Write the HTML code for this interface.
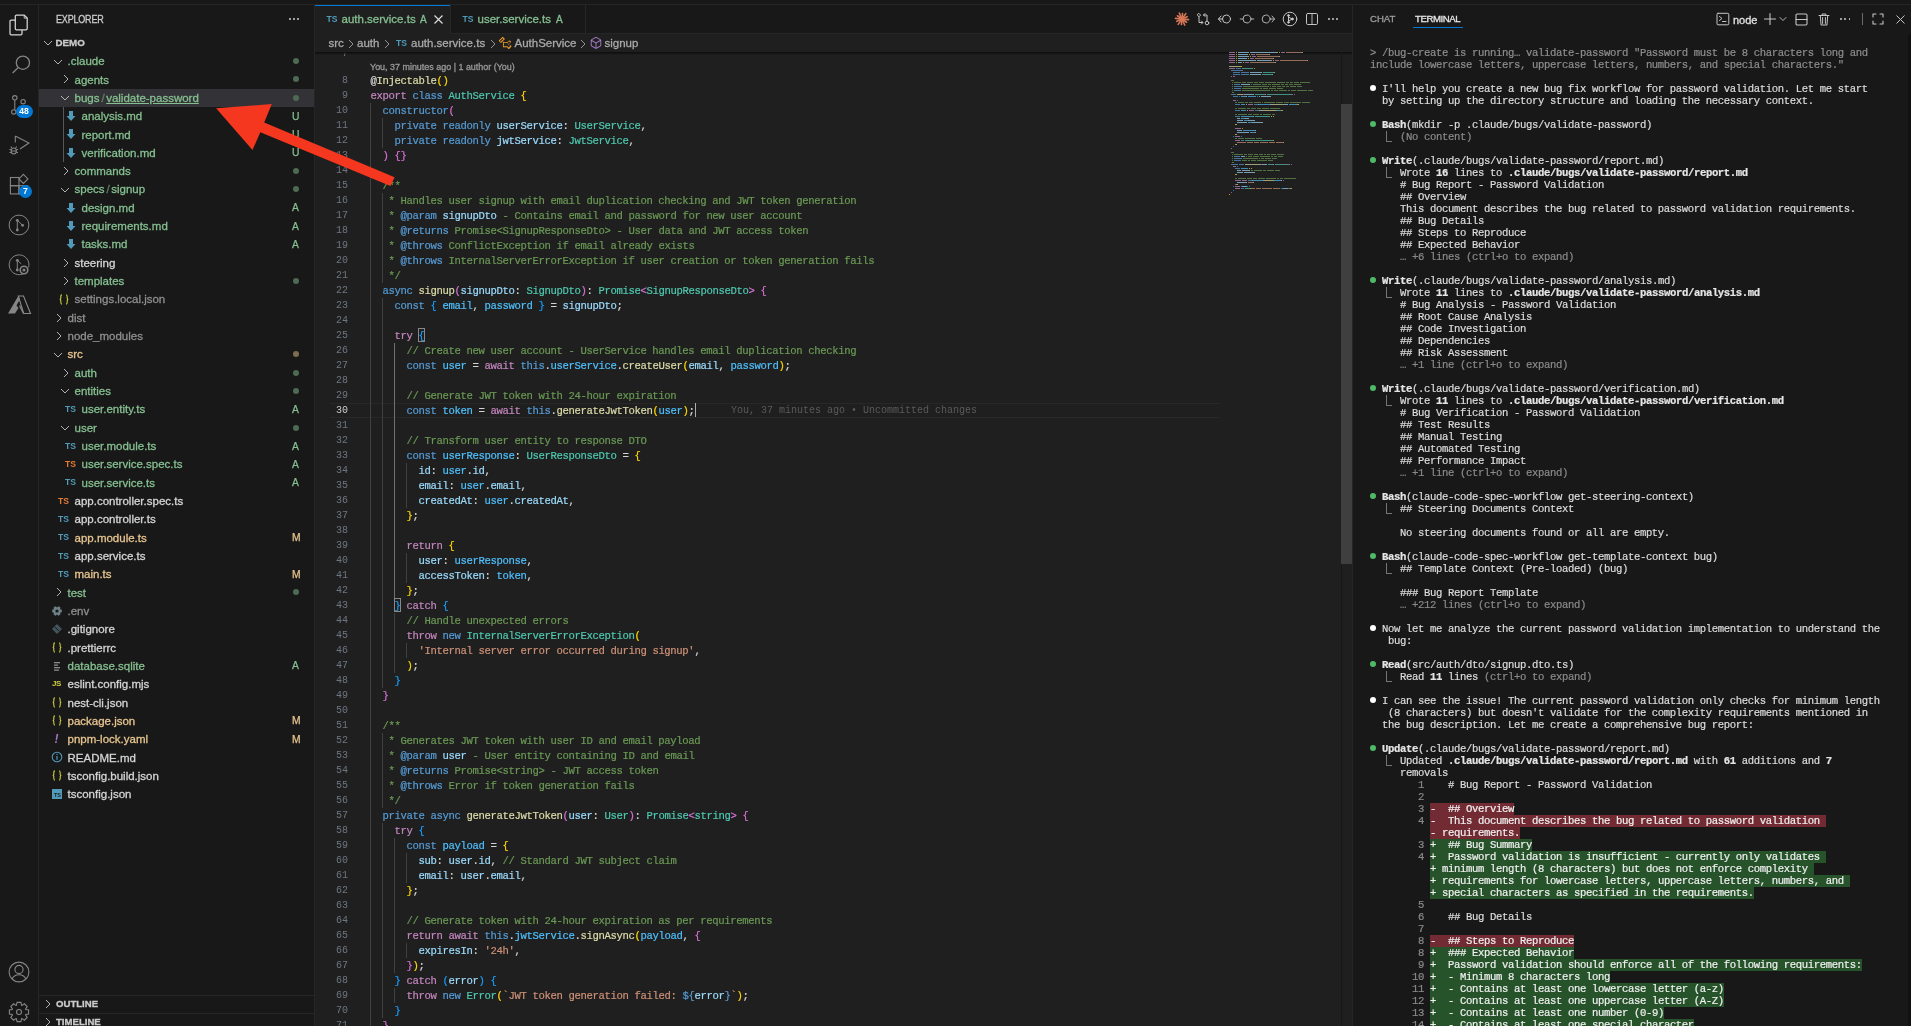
<!DOCTYPE html><html><head><meta charset="utf-8"><style>
*{margin:0;padding:0;box-sizing:border-box}
html,body{width:1911px;height:1026px;overflow:hidden;background:#181818}
body{position:relative;font-family:"Liberation Sans",sans-serif;color:#cccccc;-webkit-font-smoothing:antialiased}
.a{position:absolute}
.ui{font-family:"Liberation Sans",sans-serif;font-size:11.5px;white-space:pre;line-height:14px;-webkit-text-stroke-width:0.3px}
.mono{font-family:"Liberation Mono",monospace;white-space:pre}
svg{position:absolute;overflow:visible}
.code{font-size:10.6px;letter-spacing:-0.36px;-webkit-text-stroke-width:0.2px;}
.term{font-size:10.6px;letter-spacing:-0.36px;-webkit-text-stroke-width:0.2px;}
</style></head><body><div id="root" style="position:absolute;left:0;top:0;width:1911px;height:1026px;will-change:transform">
<div class="a" style="left:0;top:0;width:1911px;height:4px;background:#181818"></div>
<div class="a" style="left:0;top:4px;width:1911px;height:1px;background:#262626"></div>
<div class="a" style="left:0;top:5px;width:38px;height:1021px;background:#181818"></div>
<div class="a" style="left:38px;top:5px;width:1px;height:1021px;background:#262626"></div>
<div class="a" style="left:39px;top:5px;width:275px;height:1021px;background:#181818"></div>
<div class="a" style="left:314px;top:5px;width:1px;height:1021px;background:#262626"></div>
<div class="a" style="left:315px;top:5px;width:1037px;height:1021px;background:#1f1f1f"></div>
<div class="a" style="left:1352px;top:5px;width:1px;height:1021px;background:#262626"></div>
<div class="a" style="left:1353px;top:5px;width:558px;height:1021px;background:#181818"></div>
<svg class="a" style="left:4.0px;top:10.0px" width="30" height="30" viewBox="0 0 30 30" fill="none" stroke="#d4d4d4" stroke-width="1.25"><path d="M12.6 5.1h7.6l3 3V18.6a1.3 1.3 0 0 1-1.3 1.3H12.6a1.3 1.3 0 0 1-1.3-1.3V6.4a1.3 1.3 0 0 1 1.3-1.3z"/><path d="M20.2 5.1v3h3" stroke-width="0.9"/><path d="M11.3 10.1H7.3A1.3 1.3 0 0 0 6 11.4v12.2a1.3 1.3 0 0 0 1.3 1.3h9.4a1.3 1.3 0 0 0 1.3-1.3v-3.7"/></svg>
<svg class="a" style="left:7.0px;top:52.0px" width="24" height="24" viewBox="0 0 24 24" fill="none" stroke="#858585" stroke-width="1.3"><circle cx="15.9" cy="10.7" r="6.6"/><path d="M11.3 15.5L5.6 21"/></svg>
<svg class="a" style="left:7.0px;top:92.0px" width="24" height="24" viewBox="0 0 24 24" fill="none" stroke="#858585" stroke-width="1.1"><circle cx="7.8" cy="5.8" r="2.2"/><circle cx="16.1" cy="9.7" r="2.2"/><circle cx="6.8" cy="19.9" r="2.2"/><path d="M7.8 8v9.7"/></svg>
<div class="a" style="left:15.5px;top:104.5px;width:17px;height:13.5px;border-radius:7px;background:#0078d4;color:#fff;font:bold 8.6px/13.5px 'Liberation Sans',sans-serif;text-align:center">48</div>
<svg class="a" style="left:7.0px;top:132.0px" width="24" height="24" viewBox="0 0 24 24" fill="none" stroke="#858585" stroke-width="1.1"><path d="M8.3 4v6.5M8.3 4l13.6 7-9 6"/><ellipse cx="6.75" cy="19" rx="2.6" ry="3"/><path d="M4.2 17.5H2.5M4.2 20.5H2.5M9.3 17.5H11M9.3 20.5H11M4.8 15.8l-1-1.3M8.7 15.8l1-1.3M4.2 19H9.3"/></svg>
<svg class="a" style="left:7.0px;top:172.0px" width="24" height="24" viewBox="0 0 24 24" fill="none" stroke="#858585" stroke-width="1.1"><rect x="3.4" y="5.5" width="8.6" height="8.2"/><rect x="3.4" y="13.7" width="8.6" height="8.2"/><rect x="12" y="13.7" width="8.6" height="8.2"/><path d="M16.4 2.4l4.5 4.5-4.5 4.5-4.5-4.5z"/></svg>
<div class="a" style="left:19px;top:185px;width:13px;height:13px;border-radius:7px;background:#0078d4;color:#fff;font:bold 8.6px/13px 'Liberation Sans',sans-serif;text-align:center">7</div>
<svg class="a" style="left:7.0px;top:213.0px" width="24" height="24" viewBox="0 0 24 24" fill="none" stroke="#858585" stroke-width="1.0"><circle cx="12" cy="12" r="9.9"/><circle cx="10.3" cy="7.3" r="1.4" fill="#858585" stroke="none"/><circle cx="10.3" cy="17" r="1.4" fill="#858585" stroke="none"/><circle cx="15.6" cy="12.3" r="1.4" fill="#858585" stroke="none"/><path d="M10.3 7.3V17M10.3 7.3l5.3 5"/></svg>
<svg class="a" style="left:7.0px;top:253.0px" width="24" height="24" viewBox="0 0 24 24" fill="none" stroke="#858585" stroke-width="1.0"><path d="M16.8 20.5A9.9 9.9 0 1 1 21.6 14.5"/><circle cx="10.3" cy="7.3" r="1.4" fill="#858585" stroke="none"/><circle cx="10.3" cy="17" r="1.4" fill="#858585" stroke="none"/><path d="M10.3 7.3V17M10.3 7.3l4 3.6"/><circle cx="17" cy="17" r="3.8" stroke-width="1.6"/><circle cx="17" cy="17" r="1.5" fill="#858585" stroke="none"/></svg>
<svg class="a" style="left:7.0px;top:293.0px" width="24" height="24" viewBox="0 0 24 24" fill="none" stroke="#858585" stroke-width="1.2"><path d="M11.3 3h5.2l7 17.5h-6.8z" fill="none" stroke="#8a8a8a" stroke-width="1.1"/><path d="M11.3 3L1 20.5h7l3.5-5.5-2-2.5 3.5-6.3z" fill="#858585" stroke="none"/><path d="M12.5 12.5l4 8" stroke="#8a8a8a" stroke-width="1.3"/></svg>
<svg class="a" style="left:7.0px;top:960.0px" width="24" height="24" viewBox="0 0 24 24" fill="none" stroke="#858585" stroke-width="1.1"><circle cx="12" cy="12" r="9.9"/><circle cx="12" cy="9.5" r="4.1"/><path d="M5 18.8c1.6-2.9 4.2-4.1 7-4.1s5.4 1.2 7 4.1"/></svg>
<svg class="a" style="left:7.0px;top:1000.0px" width="24" height="24" viewBox="0 0 24 24" fill="none" stroke="#858585" stroke-width="1.1"><polygon points="10.05,2.40 13.95,2.40 14.54,5.26 14.97,5.44 17.41,3.83 20.17,6.59 18.56,9.03 18.74,9.46 21.60,10.05 21.60,13.95 18.74,14.54 18.56,14.97 20.17,17.41 17.41,20.17 14.97,18.56 14.54,18.74 13.95,21.60 10.05,21.60 9.46,18.74 9.03,18.56 6.59,20.17 3.83,17.41 5.44,14.97 5.26,14.54 2.40,13.95 2.40,10.05 5.26,9.46 5.44,9.03 3.83,6.59 6.59,3.83 9.03,5.44 9.46,5.26"/><circle cx="12" cy="12" r="2.5"/></svg>
<div class="a ui" style="left:55.5px;top:13.3px;font-size:10px;color:#cccccc;letter-spacing:-0.2px;transform:scaleX(0.9);transform-origin:0 0">EXPLORER</div>
<div class="a" style="left:288.84999999999997px;top:17.849999999999998px;width:1.7px;height:1.7px;border-radius:1px;background:#cccccc"></div>
<div class="a" style="left:293.15px;top:17.849999999999998px;width:1.7px;height:1.7px;border-radius:1px;background:#cccccc"></div>
<div class="a" style="left:297.45px;top:17.849999999999998px;width:1.7px;height:1.7px;border-radius:1px;background:#cccccc"></div>
<svg class="a" style="left:42.5px;top:38px" width="10" height="10" viewBox="0 0 10 10" fill="none" stroke="#c5c5c5" stroke-width="0.9"><path d="M1 3l4 4 4-4"/></svg>
<div class="a ui" style="left:55.5px;top:36px;font-size:9.8px;font-weight:bold;color:#cccccc">DEMO</div>
<div class="a" style="left:39px;top:88.65px;width:275px;height:18px;background:#333337"></div>
<div class="a" style="left:62.5px;top:106.65px;width:1px;height:54.974999999999994px;background:#585858"></div>
<svg class="a" style="left:53px;top:56.5px" width="10" height="10" viewBox="0 0 10 10" fill="none" stroke="#c5c5c5" stroke-width="0.9"><path d="M1 3l4 4 4-4"/></svg>
<div class="a ui" style="left:67.5px;top:54.2px;color:#85bf90">.claude</div>
<div class="a" style="left:293px;top:58.0px;width:6px;height:6px;border-radius:3px;background:#4e6a54"></div>
<svg class="a" style="left:60.5px;top:74.325px" width="10" height="10" viewBox="0 0 10 10" fill="none" stroke="#c5c5c5" stroke-width="0.9"><path d="M3 1l4 4-4 4"/></svg>
<div class="a ui" style="left:74.5px;top:72.525px;color:#85bf90">agents</div>
<div class="a" style="left:293px;top:76.325px;width:6px;height:6px;border-radius:3px;background:#4e6a54"></div>
<svg class="a" style="left:60px;top:93.15px" width="10" height="10" viewBox="0 0 10 10" fill="none" stroke="#c5c5c5" stroke-width="0.9"><path d="M1 3l4 4 4-4"/></svg>
<div class="a ui" style="left:74.5px;top:90.85000000000001px;color:#85bf90">bugs<span style="color:#5f7f66;margin:0 1.5px 0 2px">/</span><span style=" text-decoration:underline;text-underline-offset:1px">validate-password</span></div>
<div class="a" style="left:293px;top:94.65px;width:6px;height:6px;border-radius:3px;background:#4e6a54"></div>
<svg class="a" style="left:65.5px;top:109.975px" width="10" height="12" viewBox="0 0 10 12"><path d="M3 1h4v5h2.5L5 11 0.5 6H3z" fill="#519aba"/></svg>
<div class="a ui" style="left:81.5px;top:109.175px;color:#85bf90">analysis.md</div>
<div class="a ui" style="left:292px;top:109.675px;color:#85bf90;font-size:10.3px;-webkit-text-stroke-width:0.25px">U</div>
<svg class="a" style="left:65.5px;top:128.3px" width="10" height="12" viewBox="0 0 10 12"><path d="M3 1h4v5h2.5L5 11 0.5 6H3z" fill="#519aba"/></svg>
<div class="a ui" style="left:81.5px;top:127.50000000000001px;color:#85bf90">report.md</div>
<div class="a ui" style="left:292px;top:128.0px;color:#85bf90;font-size:10.3px;-webkit-text-stroke-width:0.25px">U</div>
<svg class="a" style="left:65.5px;top:146.625px" width="10" height="12" viewBox="0 0 10 12"><path d="M3 1h4v5h2.5L5 11 0.5 6H3z" fill="#519aba"/></svg>
<div class="a ui" style="left:81.5px;top:145.825px;color:#85bf90">verification.md</div>
<div class="a ui" style="left:292px;top:146.325px;color:#85bf90;font-size:10.3px;-webkit-text-stroke-width:0.25px">U</div>
<svg class="a" style="left:60.5px;top:165.95px" width="10" height="10" viewBox="0 0 10 10" fill="none" stroke="#c5c5c5" stroke-width="0.9"><path d="M3 1l4 4-4 4"/></svg>
<div class="a ui" style="left:74.5px;top:164.14999999999998px;color:#85bf90">commands</div>
<div class="a" style="left:293px;top:167.95px;width:6px;height:6px;border-radius:3px;background:#4e6a54"></div>
<svg class="a" style="left:60px;top:184.775px" width="10" height="10" viewBox="0 0 10 10" fill="none" stroke="#c5c5c5" stroke-width="0.9"><path d="M1 3l4 4 4-4"/></svg>
<div class="a ui" style="left:74.5px;top:182.475px;color:#85bf90">specs<span style="color:#5f7f66;margin:0 1.5px 0 2px">/</span><span style="">signup</span></div>
<div class="a" style="left:293px;top:186.275px;width:6px;height:6px;border-radius:3px;background:#4e6a54"></div>
<svg class="a" style="left:65.5px;top:201.6px" width="10" height="12" viewBox="0 0 10 12"><path d="M3 1h4v5h2.5L5 11 0.5 6H3z" fill="#519aba"/></svg>
<div class="a ui" style="left:81.5px;top:200.79999999999998px;color:#85bf90">design.md</div>
<div class="a ui" style="left:292px;top:201.29999999999998px;color:#85bf90;font-size:10.3px;-webkit-text-stroke-width:0.25px">A</div>
<svg class="a" style="left:65.5px;top:219.92499999999998px" width="10" height="12" viewBox="0 0 10 12"><path d="M3 1h4v5h2.5L5 11 0.5 6H3z" fill="#519aba"/></svg>
<div class="a ui" style="left:81.5px;top:219.12499999999997px;color:#85bf90">requirements.md</div>
<div class="a ui" style="left:292px;top:219.62499999999997px;color:#85bf90;font-size:10.3px;-webkit-text-stroke-width:0.25px">A</div>
<svg class="a" style="left:65.5px;top:238.25px" width="10" height="12" viewBox="0 0 10 12"><path d="M3 1h4v5h2.5L5 11 0.5 6H3z" fill="#519aba"/></svg>
<div class="a ui" style="left:81.5px;top:237.45px;color:#85bf90">tasks.md</div>
<div class="a ui" style="left:292px;top:237.95px;color:#85bf90;font-size:10.3px;-webkit-text-stroke-width:0.25px">A</div>
<svg class="a" style="left:60.5px;top:257.575px" width="10" height="10" viewBox="0 0 10 10" fill="none" stroke="#c5c5c5" stroke-width="0.9"><path d="M3 1l4 4-4 4"/></svg>
<div class="a ui" style="left:74.5px;top:255.77499999999998px;color:#d4d4d4">steering</div>
<svg class="a" style="left:60.5px;top:275.9px" width="10" height="10" viewBox="0 0 10 10" fill="none" stroke="#c5c5c5" stroke-width="0.9"><path d="M3 1l4 4-4 4"/></svg>
<div class="a ui" style="left:74.5px;top:274.09999999999997px;color:#85bf90">templates</div>
<div class="a" style="left:293px;top:277.9px;width:6px;height:6px;border-radius:3px;background:#4e6a54"></div>
<svg class="a" style="left:58.5px;top:293.725px" width="10" height="11" viewBox="0 0 10 11" fill="none" stroke="#cbcb41" stroke-width="1.1"><path d="M3 0.8C1.8 0.8 1.8 1.5 1.8 3v1.2c0 0.8-0.4 1.3-1.1 1.3 0.7 0 1.1 0.5 1.1 1.3V8c0 1.5 0 2.2 1.2 2.2M7 0.8c1.2 0 1.2 0.7 1.2 2.2v1.2c0 0.8 0.4 1.3 1.1 1.3-0.7 0-1.1 0.5-1.1 1.3V8c0 1.5 0 2.2-1.2 2.2"/></svg>
<div class="a ui" style="left:74.5px;top:292.425px;color:#8f8f8f">settings.local.json</div>
<svg class="a" style="left:53.5px;top:312.55px" width="10" height="10" viewBox="0 0 10 10" fill="none" stroke="#c5c5c5" stroke-width="0.9"><path d="M3 1l4 4-4 4"/></svg>
<div class="a ui" style="left:67.5px;top:310.75px;color:#8f8f8f">dist</div>
<svg class="a" style="left:53.5px;top:330.875px" width="10" height="10" viewBox="0 0 10 10" fill="none" stroke="#c5c5c5" stroke-width="0.9"><path d="M3 1l4 4-4 4"/></svg>
<div class="a ui" style="left:67.5px;top:329.075px;color:#8f8f8f">node_modules</div>
<svg class="a" style="left:53px;top:349.7px" width="10" height="10" viewBox="0 0 10 10" fill="none" stroke="#c5c5c5" stroke-width="0.9"><path d="M1 3l4 4 4-4"/></svg>
<div class="a ui" style="left:67.5px;top:347.4px;color:#e6c48f">src</div>
<div class="a" style="left:293px;top:351.2px;width:6px;height:6px;border-radius:3px;background:#7d6c50"></div>
<svg class="a" style="left:60.5px;top:367.525px" width="10" height="10" viewBox="0 0 10 10" fill="none" stroke="#c5c5c5" stroke-width="0.9"><path d="M3 1l4 4-4 4"/></svg>
<div class="a ui" style="left:74.5px;top:365.72499999999997px;color:#85bf90">auth</div>
<div class="a" style="left:293px;top:369.525px;width:6px;height:6px;border-radius:3px;background:#4e6a54"></div>
<svg class="a" style="left:60px;top:386.34999999999997px" width="10" height="10" viewBox="0 0 10 10" fill="none" stroke="#c5c5c5" stroke-width="0.9"><path d="M1 3l4 4 4-4"/></svg>
<div class="a ui" style="left:74.5px;top:384.04999999999995px;color:#85bf90">entities</div>
<div class="a" style="left:293px;top:387.84999999999997px;width:6px;height:6px;border-radius:3px;background:#4e6a54"></div>
<div class="a" style="left:63.5px;top:403.175px;width:14px;height:12px;font:bold 8.6px/12px 'Liberation Sans',sans-serif;color:#519aba;text-align:center;letter-spacing:-0.1px">TS</div>
<div class="a ui" style="left:81.5px;top:402.375px;color:#85bf90">user.entity.ts</div>
<div class="a ui" style="left:292px;top:402.875px;color:#85bf90;font-size:10.3px;-webkit-text-stroke-width:0.25px">A</div>
<svg class="a" style="left:60px;top:423.0px" width="10" height="10" viewBox="0 0 10 10" fill="none" stroke="#c5c5c5" stroke-width="0.9"><path d="M1 3l4 4 4-4"/></svg>
<div class="a ui" style="left:74.5px;top:420.7px;color:#85bf90">user</div>
<div class="a" style="left:293px;top:424.5px;width:6px;height:6px;border-radius:3px;background:#4e6a54"></div>
<div class="a" style="left:63.5px;top:439.825px;width:14px;height:12px;font:bold 8.6px/12px 'Liberation Sans',sans-serif;color:#519aba;text-align:center;letter-spacing:-0.1px">TS</div>
<div class="a ui" style="left:81.5px;top:439.025px;color:#85bf90">user.module.ts</div>
<div class="a ui" style="left:292px;top:439.525px;color:#85bf90;font-size:10.3px;-webkit-text-stroke-width:0.25px">A</div>
<div class="a" style="left:63.5px;top:458.15px;width:14px;height:12px;font:bold 8.6px/12px 'Liberation Sans',sans-serif;color:#e37933;text-align:center;letter-spacing:-0.1px">TS</div>
<div class="a ui" style="left:81.5px;top:457.34999999999997px;color:#85bf90">user.service.spec.ts</div>
<div class="a ui" style="left:292px;top:457.84999999999997px;color:#85bf90;font-size:10.3px;-webkit-text-stroke-width:0.25px">A</div>
<div class="a" style="left:63.5px;top:476.47499999999997px;width:14px;height:12px;font:bold 8.6px/12px 'Liberation Sans',sans-serif;color:#519aba;text-align:center;letter-spacing:-0.1px">TS</div>
<div class="a ui" style="left:81.5px;top:475.67499999999995px;color:#85bf90">user.service.ts</div>
<div class="a ui" style="left:292px;top:476.17499999999995px;color:#85bf90;font-size:10.3px;-webkit-text-stroke-width:0.25px">A</div>
<div class="a" style="left:56.5px;top:494.79999999999995px;width:14px;height:12px;font:bold 8.6px/12px 'Liberation Sans',sans-serif;color:#e37933;text-align:center;letter-spacing:-0.1px">TS</div>
<div class="a ui" style="left:74.5px;top:493.99999999999994px;color:#d4d4d4">app.controller.spec.ts</div>
<div class="a" style="left:56.5px;top:513.125px;width:14px;height:12px;font:bold 8.6px/12px 'Liberation Sans',sans-serif;color:#519aba;text-align:center;letter-spacing:-0.1px">TS</div>
<div class="a ui" style="left:74.5px;top:512.325px;color:#d4d4d4">app.controller.ts</div>
<div class="a" style="left:56.5px;top:531.45px;width:14px;height:12px;font:bold 8.6px/12px 'Liberation Sans',sans-serif;color:#519aba;text-align:center;letter-spacing:-0.1px">TS</div>
<div class="a ui" style="left:74.5px;top:530.6500000000001px;color:#e6c48f">app.module.ts</div>
<div class="a ui" style="left:292px;top:531.1500000000001px;color:#e6c48f;font-size:10.3px;-webkit-text-stroke-width:0.25px">M</div>
<div class="a" style="left:56.5px;top:549.775px;width:14px;height:12px;font:bold 8.6px/12px 'Liberation Sans',sans-serif;color:#519aba;text-align:center;letter-spacing:-0.1px">TS</div>
<div class="a ui" style="left:74.5px;top:548.975px;color:#d4d4d4">app.service.ts</div>
<div class="a" style="left:56.5px;top:568.1px;width:14px;height:12px;font:bold 8.6px/12px 'Liberation Sans',sans-serif;color:#519aba;text-align:center;letter-spacing:-0.1px">TS</div>
<div class="a ui" style="left:74.5px;top:567.3000000000001px;color:#e6c48f">main.ts</div>
<div class="a ui" style="left:292px;top:567.8000000000001px;color:#e6c48f;font-size:10.3px;-webkit-text-stroke-width:0.25px">M</div>
<svg class="a" style="left:53.5px;top:587.425px" width="10" height="10" viewBox="0 0 10 10" fill="none" stroke="#c5c5c5" stroke-width="0.9"><path d="M3 1l4 4-4 4"/></svg>
<div class="a ui" style="left:67.5px;top:585.625px;color:#85bf90">test</div>
<div class="a" style="left:293px;top:589.425px;width:6px;height:6px;border-radius:3px;background:#4e6a54"></div>
<svg class="a" style="left:50.5px;top:604.75px" width="12" height="12" viewBox="0 0 12 12"><polygon points="10.84,4.76 10.84,7.24 9.16,7.73 9.07,7.87 9.49,9.58 7.35,10.81 6.08,9.60 5.92,9.60 4.65,10.81 2.51,9.58 2.93,7.87 2.84,7.73 1.16,7.24 1.16,4.76 2.84,4.27 2.93,4.13 2.51,2.42 4.65,1.19 5.92,2.40 6.08,2.40 7.35,1.19 9.49,2.42 9.07,4.13 9.16,4.27" fill="#6d8086"/><circle cx="6" cy="6" r="1.6" fill="#181818"/></svg>
<div class="a ui" style="left:67.5px;top:603.95px;color:#8f8f8f">.env</div>
<svg class="a" style="left:50.5px;top:623.0749999999999px" width="12" height="12" viewBox="0 0 12 12"><path d="M6 1l5 5-5 5-5-5z" fill="#41535b"/><path d="M4 4l4 4" stroke="#181818" stroke-width="1"/></svg>
<div class="a ui" style="left:67.5px;top:622.275px;color:#d4d4d4">.gitignore</div>
<svg class="a" style="left:51.5px;top:641.9px" width="10" height="11" viewBox="0 0 10 11" fill="none" stroke="#cbcb41" stroke-width="1.1"><path d="M3 0.8C1.8 0.8 1.8 1.5 1.8 3v1.2c0 0.8-0.4 1.3-1.1 1.3 0.7 0 1.1 0.5 1.1 1.3V8c0 1.5 0 2.2 1.2 2.2M7 0.8c1.2 0 1.2 0.7 1.2 2.2v1.2c0 0.8 0.4 1.3 1.1 1.3-0.7 0-1.1 0.5-1.1 1.3V8c0 1.5 0 2.2-1.2 2.2"/></svg>
<div class="a ui" style="left:67.5px;top:640.6px;color:#d4d4d4">.prettierrc</div>
<svg class="a" style="left:51.5px;top:659.725px" width="10" height="12" viewBox="0 0 10 12" fill="#8a8a8a"><rect x="2" y="2" width="6" height="1.3"/><rect x="2" y="4.5" width="4" height="1.3"/><rect x="2" y="7" width="6" height="1.3"/><rect x="2" y="9.5" width="5" height="1.3"/></svg>
<div class="a ui" style="left:67.5px;top:658.9250000000001px;color:#85bf90">database.sqlite</div>
<div class="a ui" style="left:292px;top:659.4250000000001px;color:#85bf90;font-size:10.3px;-webkit-text-stroke-width:0.25px">A</div>
<div class="a" style="left:50.5px;top:678.05px;width:12px;height:12px;font:bold 8px/12px 'Liberation Sans',sans-serif;color:#cbcb41;text-align:center;letter-spacing:-0.3px">JS</div>
<div class="a ui" style="left:67.5px;top:677.25px;color:#d4d4d4">eslint.config.mjs</div>
<svg class="a" style="left:51.5px;top:696.875px" width="10" height="11" viewBox="0 0 10 11" fill="none" stroke="#cbcb41" stroke-width="1.1"><path d="M3 0.8C1.8 0.8 1.8 1.5 1.8 3v1.2c0 0.8-0.4 1.3-1.1 1.3 0.7 0 1.1 0.5 1.1 1.3V8c0 1.5 0 2.2 1.2 2.2M7 0.8c1.2 0 1.2 0.7 1.2 2.2v1.2c0 0.8 0.4 1.3 1.1 1.3-0.7 0-1.1 0.5-1.1 1.3V8c0 1.5 0 2.2-1.2 2.2"/></svg>
<div class="a ui" style="left:67.5px;top:695.575px;color:#d4d4d4">nest-cli.json</div>
<svg class="a" style="left:51.5px;top:715.1999999999999px" width="10" height="11" viewBox="0 0 10 11" fill="none" stroke="#cbcb41" stroke-width="1.1"><path d="M3 0.8C1.8 0.8 1.8 1.5 1.8 3v1.2c0 0.8-0.4 1.3-1.1 1.3 0.7 0 1.1 0.5 1.1 1.3V8c0 1.5 0 2.2 1.2 2.2M7 0.8c1.2 0 1.2 0.7 1.2 2.2v1.2c0 0.8 0.4 1.3 1.1 1.3-0.7 0-1.1 0.5-1.1 1.3V8c0 1.5 0 2.2-1.2 2.2"/></svg>
<div class="a ui" style="left:67.5px;top:713.9px;color:#e6c48f">package.json</div>
<div class="a ui" style="left:292px;top:714.4px;color:#e6c48f;font-size:10.3px;-webkit-text-stroke-width:0.25px">M</div>
<div class="a" style="left:50.5px;top:732.025px;width:12px;height:14px;font:italic bold 12px/14px 'Liberation Sans',sans-serif;color:#a074c4;text-align:center">!</div>
<div class="a ui" style="left:67.5px;top:732.225px;color:#e6c48f">pnpm-lock.yaml</div>
<div class="a ui" style="left:292px;top:732.725px;color:#e6c48f;font-size:10.3px;-webkit-text-stroke-width:0.25px">M</div>
<svg class="a" style="left:50.5px;top:751.35px" width="12" height="12" viewBox="0 0 12 12"><circle cx="6" cy="6" r="4.8" fill="none" stroke="#519aba" stroke-width="1.1"/><rect x="5.4" y="5" width="1.2" height="3.8" fill="#519aba"/><circle cx="6" cy="3.4" r="0.7" fill="#519aba"/></svg>
<div class="a ui" style="left:67.5px;top:750.5500000000001px;color:#d4d4d4">README.md</div>
<svg class="a" style="left:51.5px;top:770.175px" width="10" height="11" viewBox="0 0 10 11" fill="none" stroke="#cbcb41" stroke-width="1.1"><path d="M3 0.8C1.8 0.8 1.8 1.5 1.8 3v1.2c0 0.8-0.4 1.3-1.1 1.3 0.7 0 1.1 0.5 1.1 1.3V8c0 1.5 0 2.2 1.2 2.2M7 0.8c1.2 0 1.2 0.7 1.2 2.2v1.2c0 0.8 0.4 1.3 1.1 1.3-0.7 0-1.1 0.5-1.1 1.3V8c0 1.5 0 2.2-1.2 2.2"/></svg>
<div class="a ui" style="left:67.5px;top:768.875px;color:#d4d4d4">tsconfig.build.json</div>
<div class="a" style="left:51.5px;top:789.0px;width:10px;height:10px;background:#519aba;font:bold 5.5px/12px 'Liberation Sans',sans-serif;color:#1f1f1f;text-align:right;padding-right:0.5px">TS</div>
<div class="a ui" style="left:67.5px;top:787.2px;color:#d4d4d4">tsconfig.json</div>
<div class="a" style="left:39px;top:995px;width:275px;height:1px;background:#262626"></div>
<svg class="a" style="left:43px;top:999px" width="10" height="10" viewBox="0 0 10 10" fill="none" stroke="#c5c5c5" stroke-width="0.9"><path d="M3 1l4 4-4 4"/></svg>
<div class="a ui" style="left:56px;top:997px;font-size:9.6px;font-weight:bold;color:#cccccc">OUTLINE</div>
<div class="a" style="left:39px;top:1013px;width:275px;height:1px;background:#262626"></div>
<svg class="a" style="left:43px;top:1017px" width="10" height="10" viewBox="0 0 10 10" fill="none" stroke="#c5c5c5" stroke-width="0.9"><path d="M3 1l4 4-4 4"/></svg>
<div class="a ui" style="left:56px;top:1015px;font-size:9.6px;font-weight:bold;color:#cccccc">TIMELINE</div>
<div class="a" style="left:315px;top:5px;width:1037px;height:28px;background:#181818"></div>
<div class="a" style="left:315px;top:33px;width:1037px;height:1px;background:#262626"></div>
<div class="a" style="left:315px;top:5px;width:135px;height:29px;background:#1f1f1f;border-top:1px solid #0078d4"></div>
<div class="a" style="left:450px;top:5px;width:1px;height:28px;background:#262626"></div>
<div class="a" style="left:585px;top:5px;width:1px;height:28px;background:#262626"></div>
<div class="a" style="left:326.5px;top:12.5px;height:12px;font:bold 8.6px/12px 'Liberation Sans',sans-serif;color:#519aba;letter-spacing:-0.1px;white-space:pre">TS</div>
<div class="a ui" style="left:341.5px;top:12px;color:#85bf90">auth.service.ts</div>
<div class="a ui" style="left:420px;top:13px;color:#85bf90;font-size:10px">A</div>
<svg class="a" style="left:434px;top:15px" width="9" height="9" viewBox="0 0 9 9" stroke="#e0e0e0" stroke-width="1.1"><path d="M0.5 0.5l8 8M8.5 0.5l-8 8"/></svg>
<div class="a" style="left:462.5px;top:12.5px;height:12px;font:bold 8.6px/12px 'Liberation Sans',sans-serif;color:#519aba;letter-spacing:-0.1px;white-space:pre">TS</div>
<div class="a ui" style="left:477.5px;top:12px;color:#85bf90">user.service.ts</div>
<div class="a ui" style="left:556px;top:13px;color:#85bf90;font-size:10px">A</div>
<div class="a ui" style="left:328.5px;top:36px;color:#a9a9a9">src</div>
<svg class="a" style="left:345.5px;top:38.5px" width="10" height="10" viewBox="0 0 10 10" fill="none" stroke="#a0a0a0" stroke-width="0.9"><path d="M3 1l4 4-4 4"/></svg>
<div class="a ui" style="left:357px;top:36px;color:#a9a9a9">auth</div>
<svg class="a" style="left:381.5px;top:38.5px" width="10" height="10" viewBox="0 0 10 10" fill="none" stroke="#a0a0a0" stroke-width="0.9"><path d="M3 1l4 4-4 4"/></svg>
<div class="a" style="left:396px;top:37px;height:12px;font:bold 8.6px/12px 'Liberation Sans',sans-serif;color:#519aba;letter-spacing:-0.1px;white-space:pre">TS</div>
<div class="a ui" style="left:411px;top:36px;color:#a9a9a9">auth.service.ts</div>
<svg class="a" style="left:487.5px;top:38.5px" width="10" height="10" viewBox="0 0 10 10" fill="none" stroke="#a0a0a0" stroke-width="0.9"><path d="M3 1l4 4-4 4"/></svg>
<svg class="a" style="left:498px;top:35.5px" width="14" height="14" viewBox="0 0 16 16"><path fill="#ee9d28" d="M11.34 9.71h.71l2.67-2.67v-.71L13.38 5h-.7l-1.82 1.81h-5V5.56l1.86-1.86V3l-2-2H5L1 5v.71l2 2h.71l1.930-1.95v7h5.01v.71l1.34 1.34h.71l2.67-2.67v-.71L13.38 10h-.7l-1.86 1.85h-4.2V7.84h4.160v.71l.56.55zm-8.27-3L2.06 5.71 5.35 2.5l1.01 1-3.29 3.21zm9.64 3.27l1.34 1.34-1.96 1.96-1.34-1.34 1.96-1.960zm0-4l1.34 1.34-1.96 1.96-1.34-1.34 1.96-1.96z"/></svg>
<div class="a ui" style="left:514.5px;top:36px;color:#a9a9a9">AuthService</div>
<svg class="a" style="left:577.5px;top:38.5px" width="10" height="10" viewBox="0 0 10 10" fill="none" stroke="#a0a0a0" stroke-width="0.9"><path d="M3 1l4 4-4 4"/></svg>
<svg class="a" style="left:588.5px;top:36px" width="14" height="14" viewBox="0 0 16 16"><path fill="#b180d7" d="M13.51 4l-5-3h-1l-5 3-.49.86v6l.49.85 5 3h1l5-3 .49-.85v-6L13.51 4zm-6 9.56l-4.5-2.7V5.7l4.5 2.45v5.41zM3.27 4.7l4.740-2.84 4.74 2.84-4.74 2.59L3.27 4.7zm9.74 6.16l-4.5 2.7V8.15l4.5-2.45v5.16z"/></svg>
<div class="a ui" style="left:604.5px;top:36px;color:#a9a9a9">signup</div>
<div class="a" style="left:315px;top:52px;width:1037px;height:974px;overflow:hidden">
<div class="a" style="left:15px;top:350.5px;width:890px;height:15px;border-top:1px solid #282828;border-bottom:1px solid #282828"></div>
<div class="a" style="left:55.0px;top:50.5px;width:1px;height:930.0px;background:#404040"></div>
<div class="a" style="left:67.0px;top:65.5px;width:1px;height:30.0px;background:#404040"></div>
<div class="a" style="left:67.0px;top:140.5px;width:1px;height:90.0px;background:#404040"></div>
<div class="a" style="left:67.0px;top:245.5px;width:1px;height:390.0px;background:#404040"></div>
<div class="a" style="left:79.0px;top:290.5px;width:1px;height:255.0px;background:#707070"></div>
<div class="a" style="left:91.0px;top:410.5px;width:1px;height:45.0px;background:#404040"></div>
<div class="a" style="left:91.0px;top:500.5px;width:1px;height:30.0px;background:#404040"></div>
<div class="a" style="left:79.0px;top:560.5px;width:1px;height:60.0px;background:#404040"></div>
<div class="a" style="left:91.0px;top:590.5px;width:1px;height:15.0px;background:#404040"></div>
<div class="a" style="left:67.0px;top:680.5px;width:1px;height:75.0px;background:#404040"></div>
<div class="a" style="left:67.0px;top:770.5px;width:1px;height:195.0px;background:#404040"></div>
<div class="a" style="left:79.0px;top:785.5px;width:1px;height:135.0px;background:#404040"></div>
<div class="a" style="left:91.0px;top:800.5px;width:1px;height:30.0px;background:#404040"></div>
<div class="a" style="left:91.0px;top:890.5px;width:1px;height:15.0px;background:#404040"></div>
<div class="a" style="left:79.0px;top:935.5px;width:1px;height:15.0px;background:#404040"></div>
<div class="a mono" style="left:-17px;top:-6.200000000000003px;width:50px;text-align:right;font-size:10px;line-height:15px;color:#6e7681">7</div>
<div class="a mono" style="left:-17px;top:21.299999999999997px;width:50px;text-align:right;font-size:10px;line-height:15px;color:#6e7681">8</div>
<div class="a mono code" style="left:55.5px;top:21.900000000000006px;line-height:15px;color:#d4d4d4">@<span style="color:#dcdcaa">Injectable</span><span style="color:#ffd700">()</span></div>
<div class="a mono" style="left:-17px;top:36.3px;width:50px;text-align:right;font-size:10px;line-height:15px;color:#6e7681">9</div>
<div class="a mono code" style="left:55.5px;top:36.900000000000006px;line-height:15px;color:#d4d4d4"><span style="color:#c586c0">export</span> <span style="color:#569cd6">class</span> <span style="color:#4ec9b0">AuthService</span> <span style="color:#ffd700">{</span></div>
<div class="a mono" style="left:-17px;top:51.3px;width:50px;text-align:right;font-size:10px;line-height:15px;color:#6e7681">10</div>
<div class="a mono code" style="left:55.5px;top:51.900000000000006px;line-height:15px;color:#d4d4d4">  <span style="color:#569cd6">constructor</span><span style="color:#da70d6">(</span></div>
<div class="a mono" style="left:-17px;top:66.3px;width:50px;text-align:right;font-size:10px;line-height:15px;color:#6e7681">11</div>
<div class="a mono code" style="left:55.5px;top:66.9px;line-height:15px;color:#d4d4d4">    <span style="color:#569cd6">private</span> <span style="color:#569cd6">readonly</span> <span style="color:#9cdcfe">userService</span>: <span style="color:#4ec9b0">UserService</span>,</div>
<div class="a mono" style="left:-17px;top:81.30000000000001px;width:50px;text-align:right;font-size:10px;line-height:15px;color:#6e7681">12</div>
<div class="a mono code" style="left:55.5px;top:81.9px;line-height:15px;color:#d4d4d4">    <span style="color:#569cd6">private</span> <span style="color:#569cd6">readonly</span> <span style="color:#9cdcfe">jwtService</span>: <span style="color:#4ec9b0">JwtService</span>,</div>
<div class="a mono" style="left:-17px;top:96.30000000000001px;width:50px;text-align:right;font-size:10px;line-height:15px;color:#6e7681">13</div>
<div class="a mono code" style="left:55.5px;top:96.9px;line-height:15px;color:#d4d4d4">  <span style="color:#da70d6">)</span> <span style="color:#da70d6">{}</span></div>
<div class="a mono" style="left:-17px;top:111.30000000000001px;width:50px;text-align:right;font-size:10px;line-height:15px;color:#6e7681">14</div>
<div class="a mono" style="left:-17px;top:126.30000000000001px;width:50px;text-align:right;font-size:10px;line-height:15px;color:#6e7681">15</div>
<div class="a mono code" style="left:55.5px;top:126.9px;line-height:15px;color:#d4d4d4">  <span style="color:#6a9955">/**</span></div>
<div class="a mono" style="left:-17px;top:141.3px;width:50px;text-align:right;font-size:10px;line-height:15px;color:#6e7681">16</div>
<div class="a mono code" style="left:55.5px;top:141.9px;line-height:15px;color:#d4d4d4"><span style="color:#6a9955">   * Handles user signup with email duplication checking and JWT token generation</span></div>
<div class="a mono" style="left:-17px;top:156.3px;width:50px;text-align:right;font-size:10px;line-height:15px;color:#6e7681">17</div>
<div class="a mono code" style="left:55.5px;top:156.9px;line-height:15px;color:#d4d4d4"><span style="color:#6a9955">   * </span><span style="color:#569cd6">@param</span> <span style="color:#9cdcfe">signupDto</span> <span style="color:#6a9955">- Contains email and password for new user account</span></div>
<div class="a mono" style="left:-17px;top:171.3px;width:50px;text-align:right;font-size:10px;line-height:15px;color:#6e7681">18</div>
<div class="a mono code" style="left:55.5px;top:171.9px;line-height:15px;color:#d4d4d4"><span style="color:#6a9955">   * </span><span style="color:#569cd6">@returns</span> <span style="color:#6a9955">Promise&lt;SignupResponseDto&gt; - User data and JWT access token</span></div>
<div class="a mono" style="left:-17px;top:186.3px;width:50px;text-align:right;font-size:10px;line-height:15px;color:#6e7681">19</div>
<div class="a mono code" style="left:55.5px;top:186.9px;line-height:15px;color:#d4d4d4"><span style="color:#6a9955">   * </span><span style="color:#569cd6">@throws</span> <span style="color:#6a9955">ConflictException if email already exists</span></div>
<div class="a mono" style="left:-17px;top:201.3px;width:50px;text-align:right;font-size:10px;line-height:15px;color:#6e7681">20</div>
<div class="a mono code" style="left:55.5px;top:201.9px;line-height:15px;color:#d4d4d4"><span style="color:#6a9955">   * </span><span style="color:#569cd6">@throws</span> <span style="color:#6a9955">InternalServerErrorException if user creation or token generation fails</span></div>
<div class="a mono" style="left:-17px;top:216.3px;width:50px;text-align:right;font-size:10px;line-height:15px;color:#6e7681">21</div>
<div class="a mono code" style="left:55.5px;top:216.89999999999998px;line-height:15px;color:#d4d4d4"><span style="color:#6a9955">   */</span></div>
<div class="a mono" style="left:-17px;top:231.3px;width:50px;text-align:right;font-size:10px;line-height:15px;color:#6e7681">22</div>
<div class="a mono code" style="left:55.5px;top:231.89999999999998px;line-height:15px;color:#d4d4d4">  <span style="color:#569cd6">async</span> <span style="color:#dcdcaa">signup</span><span style="color:#da70d6">(</span><span style="color:#9cdcfe">signupDto</span>: <span style="color:#4ec9b0">SignupDto</span><span style="color:#da70d6">)</span>: <span style="color:#4ec9b0">Promise</span><span style="color:#da70d6">&lt;</span><span style="color:#4ec9b0">SignupResponseDto</span><span style="color:#da70d6">&gt;</span> <span style="color:#da70d6">{</span></div>
<div class="a mono" style="left:-17px;top:246.3px;width:50px;text-align:right;font-size:10px;line-height:15px;color:#6e7681">23</div>
<div class="a mono code" style="left:55.5px;top:246.89999999999998px;line-height:15px;color:#d4d4d4">    <span style="color:#569cd6">const</span> <span style="color:#179fff">{</span> <span style="color:#4fc1ff">email</span>, <span style="color:#4fc1ff">password</span> <span style="color:#179fff">}</span> = <span style="color:#9cdcfe">signupDto</span>;</div>
<div class="a mono" style="left:-17px;top:261.3px;width:50px;text-align:right;font-size:10px;line-height:15px;color:#6e7681">24</div>
<div class="a mono" style="left:-17px;top:276.3px;width:50px;text-align:right;font-size:10px;line-height:15px;color:#6e7681">25</div>
<div class="a mono code" style="left:55.5px;top:276.9px;line-height:15px;color:#d4d4d4">    <span style="color:#c586c0">try</span> <span style="color:#179fff">{</span></div>
<div class="a mono" style="left:-17px;top:291.3px;width:50px;text-align:right;font-size:10px;line-height:15px;color:#6e7681">26</div>
<div class="a mono code" style="left:55.5px;top:291.9px;line-height:15px;color:#d4d4d4">      <span style="color:#6a9955">// Create new user account - UserService handles email duplication checking</span></div>
<div class="a mono" style="left:-17px;top:306.3px;width:50px;text-align:right;font-size:10px;line-height:15px;color:#6e7681">27</div>
<div class="a mono code" style="left:55.5px;top:306.9px;line-height:15px;color:#d4d4d4">      <span style="color:#569cd6">const</span> <span style="color:#4fc1ff">user</span> = <span style="color:#c586c0">await</span> <span style="color:#569cd6">this</span>.<span style="color:#4fc1ff">userService</span>.<span style="color:#dcdcaa">createUser</span><span style="color:#ffd700">(</span><span style="color:#9cdcfe">email</span>, <span style="color:#4fc1ff">password</span><span style="color:#ffd700">)</span>;</div>
<div class="a mono" style="left:-17px;top:321.3px;width:50px;text-align:right;font-size:10px;line-height:15px;color:#6e7681">28</div>
<div class="a mono" style="left:-17px;top:336.3px;width:50px;text-align:right;font-size:10px;line-height:15px;color:#6e7681">29</div>
<div class="a mono code" style="left:55.5px;top:336.9px;line-height:15px;color:#d4d4d4">      <span style="color:#6a9955">// Generate JWT token with 24-hour expiration</span></div>
<div class="a mono" style="left:-17px;top:351.3px;width:50px;text-align:right;font-size:10px;line-height:15px;color:#cccccc">30</div>
<div class="a mono code" style="left:55.5px;top:351.9px;line-height:15px;color:#d4d4d4">      <span style="color:#569cd6">const</span> <span style="color:#4fc1ff">token</span> = <span style="color:#c586c0">await</span> <span style="color:#569cd6">this</span>.<span style="color:#dcdcaa">generateJwtToken</span><span style="color:#ffd700">(</span><span style="color:#4fc1ff">user</span><span style="color:#ffd700">)</span>;</div>
<div class="a mono" style="left:-17px;top:366.3px;width:50px;text-align:right;font-size:10px;line-height:15px;color:#6e7681">31</div>
<div class="a mono" style="left:-17px;top:381.3px;width:50px;text-align:right;font-size:10px;line-height:15px;color:#6e7681">32</div>
<div class="a mono code" style="left:55.5px;top:381.9px;line-height:15px;color:#d4d4d4">      <span style="color:#6a9955">// Transform user entity to response DTO</span></div>
<div class="a mono" style="left:-17px;top:396.3px;width:50px;text-align:right;font-size:10px;line-height:15px;color:#6e7681">33</div>
<div class="a mono code" style="left:55.5px;top:396.9px;line-height:15px;color:#d4d4d4">      <span style="color:#569cd6">const</span> <span style="color:#4fc1ff">userResponse</span>: <span style="color:#4ec9b0">UserResponseDto</span> = <span style="color:#ffd700">{</span></div>
<div class="a mono" style="left:-17px;top:411.3px;width:50px;text-align:right;font-size:10px;line-height:15px;color:#6e7681">34</div>
<div class="a mono code" style="left:55.5px;top:411.9px;line-height:15px;color:#d4d4d4">        <span style="color:#9cdcfe">id</span>: <span style="color:#4fc1ff">user</span>.<span style="color:#9cdcfe">id</span>,</div>
<div class="a mono" style="left:-17px;top:426.3px;width:50px;text-align:right;font-size:10px;line-height:15px;color:#6e7681">35</div>
<div class="a mono code" style="left:55.5px;top:426.9px;line-height:15px;color:#d4d4d4">        <span style="color:#9cdcfe">email</span>: <span style="color:#4fc1ff">user</span>.<span style="color:#9cdcfe">email</span>,</div>
<div class="a mono" style="left:-17px;top:441.3px;width:50px;text-align:right;font-size:10px;line-height:15px;color:#6e7681">36</div>
<div class="a mono code" style="left:55.5px;top:441.9px;line-height:15px;color:#d4d4d4">        <span style="color:#9cdcfe">createdAt</span>: <span style="color:#4fc1ff">user</span>.<span style="color:#9cdcfe">createdAt</span>,</div>
<div class="a mono" style="left:-17px;top:456.3px;width:50px;text-align:right;font-size:10px;line-height:15px;color:#6e7681">37</div>
<div class="a mono code" style="left:55.5px;top:456.9px;line-height:15px;color:#d4d4d4">      <span style="color:#ffd700">}</span>;</div>
<div class="a mono" style="left:-17px;top:471.29999999999995px;width:50px;text-align:right;font-size:10px;line-height:15px;color:#6e7681">38</div>
<div class="a mono" style="left:-17px;top:486.29999999999995px;width:50px;text-align:right;font-size:10px;line-height:15px;color:#6e7681">39</div>
<div class="a mono code" style="left:55.5px;top:486.9px;line-height:15px;color:#d4d4d4">      <span style="color:#c586c0">return</span> <span style="color:#ffd700">{</span></div>
<div class="a mono" style="left:-17px;top:501.29999999999995px;width:50px;text-align:right;font-size:10px;line-height:15px;color:#6e7681">40</div>
<div class="a mono code" style="left:55.5px;top:501.9px;line-height:15px;color:#d4d4d4">        <span style="color:#9cdcfe">user</span>: <span style="color:#4fc1ff">userResponse</span>,</div>
<div class="a mono" style="left:-17px;top:516.3px;width:50px;text-align:right;font-size:10px;line-height:15px;color:#6e7681">41</div>
<div class="a mono code" style="left:55.5px;top:516.9px;line-height:15px;color:#d4d4d4">        <span style="color:#9cdcfe">accessToken</span>: <span style="color:#4fc1ff">token</span>,</div>
<div class="a mono" style="left:-17px;top:531.3px;width:50px;text-align:right;font-size:10px;line-height:15px;color:#6e7681">42</div>
<div class="a mono code" style="left:55.5px;top:531.9px;line-height:15px;color:#d4d4d4">      <span style="color:#ffd700">}</span>;</div>
<div class="a mono" style="left:-17px;top:546.3px;width:50px;text-align:right;font-size:10px;line-height:15px;color:#6e7681">43</div>
<div class="a mono code" style="left:55.5px;top:546.9px;line-height:15px;color:#d4d4d4">    <span style="color:#179fff">}</span> <span style="color:#c586c0">catch</span> <span style="color:#179fff">{</span></div>
<div class="a mono" style="left:-17px;top:561.3px;width:50px;text-align:right;font-size:10px;line-height:15px;color:#6e7681">44</div>
<div class="a mono code" style="left:55.5px;top:561.9px;line-height:15px;color:#d4d4d4">      <span style="color:#6a9955">// Handle unexpected errors</span></div>
<div class="a mono" style="left:-17px;top:576.3px;width:50px;text-align:right;font-size:10px;line-height:15px;color:#6e7681">45</div>
<div class="a mono code" style="left:55.5px;top:576.9px;line-height:15px;color:#d4d4d4">      <span style="color:#c586c0">throw</span> <span style="color:#569cd6">new</span> <span style="color:#4ec9b0">InternalServerErrorException</span><span style="color:#ffd700">(</span></div>
<div class="a mono" style="left:-17px;top:591.3px;width:50px;text-align:right;font-size:10px;line-height:15px;color:#6e7681">46</div>
<div class="a mono code" style="left:55.5px;top:591.9px;line-height:15px;color:#d4d4d4">        <span style="color:#ce9178">&#x27;Internal server error occurred during signup&#x27;</span>,</div>
<div class="a mono" style="left:-17px;top:606.3px;width:50px;text-align:right;font-size:10px;line-height:15px;color:#6e7681">47</div>
<div class="a mono code" style="left:55.5px;top:606.9px;line-height:15px;color:#d4d4d4">      <span style="color:#ffd700">)</span>;</div>
<div class="a mono" style="left:-17px;top:621.3px;width:50px;text-align:right;font-size:10px;line-height:15px;color:#6e7681">48</div>
<div class="a mono code" style="left:55.5px;top:621.9px;line-height:15px;color:#d4d4d4">    <span style="color:#179fff">}</span></div>
<div class="a mono" style="left:-17px;top:636.3px;width:50px;text-align:right;font-size:10px;line-height:15px;color:#6e7681">49</div>
<div class="a mono code" style="left:55.5px;top:636.9px;line-height:15px;color:#d4d4d4">  <span style="color:#da70d6">}</span></div>
<div class="a mono" style="left:-17px;top:651.3px;width:50px;text-align:right;font-size:10px;line-height:15px;color:#6e7681">50</div>
<div class="a mono" style="left:-17px;top:666.3px;width:50px;text-align:right;font-size:10px;line-height:15px;color:#6e7681">51</div>
<div class="a mono code" style="left:55.5px;top:666.9px;line-height:15px;color:#d4d4d4">  <span style="color:#6a9955">/**</span></div>
<div class="a mono" style="left:-17px;top:681.3px;width:50px;text-align:right;font-size:10px;line-height:15px;color:#6e7681">52</div>
<div class="a mono code" style="left:55.5px;top:681.9px;line-height:15px;color:#d4d4d4"><span style="color:#6a9955">   * Generates JWT token with user ID and email payload</span></div>
<div class="a mono" style="left:-17px;top:696.3px;width:50px;text-align:right;font-size:10px;line-height:15px;color:#6e7681">53</div>
<div class="a mono code" style="left:55.5px;top:696.9px;line-height:15px;color:#d4d4d4"><span style="color:#6a9955">   * </span><span style="color:#569cd6">@param</span> <span style="color:#9cdcfe">user</span> <span style="color:#6a9955">- User entity containing ID and email</span></div>
<div class="a mono" style="left:-17px;top:711.3px;width:50px;text-align:right;font-size:10px;line-height:15px;color:#6e7681">54</div>
<div class="a mono code" style="left:55.5px;top:711.9px;line-height:15px;color:#d4d4d4"><span style="color:#6a9955">   * </span><span style="color:#569cd6">@returns</span> <span style="color:#6a9955">Promise&lt;string&gt; - JWT access token</span></div>
<div class="a mono" style="left:-17px;top:726.3px;width:50px;text-align:right;font-size:10px;line-height:15px;color:#6e7681">55</div>
<div class="a mono code" style="left:55.5px;top:726.9px;line-height:15px;color:#d4d4d4"><span style="color:#6a9955">   * </span><span style="color:#569cd6">@throws</span> <span style="color:#6a9955">Error if token generation fails</span></div>
<div class="a mono" style="left:-17px;top:741.3px;width:50px;text-align:right;font-size:10px;line-height:15px;color:#6e7681">56</div>
<div class="a mono code" style="left:55.5px;top:741.9px;line-height:15px;color:#d4d4d4"><span style="color:#6a9955">   */</span></div>
<div class="a mono" style="left:-17px;top:756.3px;width:50px;text-align:right;font-size:10px;line-height:15px;color:#6e7681">57</div>
<div class="a mono code" style="left:55.5px;top:756.9px;line-height:15px;color:#d4d4d4">  <span style="color:#569cd6">private</span> <span style="color:#569cd6">async</span> <span style="color:#dcdcaa">generateJwtToken</span><span style="color:#da70d6">(</span><span style="color:#9cdcfe">user</span>: <span style="color:#4ec9b0">User</span><span style="color:#da70d6">)</span>: <span style="color:#4ec9b0">Promise</span><span style="color:#da70d6">&lt;</span><span style="color:#4ec9b0">string</span><span style="color:#da70d6">&gt;</span> <span style="color:#da70d6">{</span></div>
<div class="a mono" style="left:-17px;top:771.3px;width:50px;text-align:right;font-size:10px;line-height:15px;color:#6e7681">58</div>
<div class="a mono code" style="left:55.5px;top:771.9px;line-height:15px;color:#d4d4d4">    <span style="color:#c586c0">try</span> <span style="color:#179fff">{</span></div>
<div class="a mono" style="left:-17px;top:786.3px;width:50px;text-align:right;font-size:10px;line-height:15px;color:#6e7681">59</div>
<div class="a mono code" style="left:55.5px;top:786.9px;line-height:15px;color:#d4d4d4">      <span style="color:#569cd6">const</span> <span style="color:#4fc1ff">payload</span> = <span style="color:#ffd700">{</span></div>
<div class="a mono" style="left:-17px;top:801.3px;width:50px;text-align:right;font-size:10px;line-height:15px;color:#6e7681">60</div>
<div class="a mono code" style="left:55.5px;top:801.9px;line-height:15px;color:#d4d4d4">        <span style="color:#9cdcfe">sub</span>: <span style="color:#9cdcfe">user</span>.<span style="color:#9cdcfe">id</span>, <span style="color:#6a9955">// Standard JWT subject claim</span></div>
<div class="a mono" style="left:-17px;top:816.3px;width:50px;text-align:right;font-size:10px;line-height:15px;color:#6e7681">61</div>
<div class="a mono code" style="left:55.5px;top:816.9px;line-height:15px;color:#d4d4d4">        <span style="color:#9cdcfe">email</span>: <span style="color:#9cdcfe">user</span>.<span style="color:#9cdcfe">email</span>,</div>
<div class="a mono" style="left:-17px;top:831.3px;width:50px;text-align:right;font-size:10px;line-height:15px;color:#6e7681">62</div>
<div class="a mono code" style="left:55.5px;top:831.9px;line-height:15px;color:#d4d4d4">      <span style="color:#ffd700">}</span>;</div>
<div class="a mono" style="left:-17px;top:846.3px;width:50px;text-align:right;font-size:10px;line-height:15px;color:#6e7681">63</div>
<div class="a mono" style="left:-17px;top:861.3px;width:50px;text-align:right;font-size:10px;line-height:15px;color:#6e7681">64</div>
<div class="a mono code" style="left:55.5px;top:861.9px;line-height:15px;color:#d4d4d4">      <span style="color:#6a9955">// Generate token with 24-hour expiration as per requirements</span></div>
<div class="a mono" style="left:-17px;top:876.3px;width:50px;text-align:right;font-size:10px;line-height:15px;color:#6e7681">65</div>
<div class="a mono code" style="left:55.5px;top:876.9px;line-height:15px;color:#d4d4d4">      <span style="color:#c586c0">return</span> <span style="color:#c586c0">await</span> <span style="color:#569cd6">this</span>.<span style="color:#4fc1ff">jwtService</span>.<span style="color:#dcdcaa">signAsync</span><span style="color:#ffd700">(</span><span style="color:#4fc1ff">payload</span>, <span style="color:#da70d6">{</span></div>
<div class="a mono" style="left:-17px;top:891.3px;width:50px;text-align:right;font-size:10px;line-height:15px;color:#6e7681">66</div>
<div class="a mono code" style="left:55.5px;top:891.9px;line-height:15px;color:#d4d4d4">        <span style="color:#9cdcfe">expiresIn</span>: <span style="color:#ce9178">&#x27;24h&#x27;</span>,</div>
<div class="a mono" style="left:-17px;top:906.3px;width:50px;text-align:right;font-size:10px;line-height:15px;color:#6e7681">67</div>
<div class="a mono code" style="left:55.5px;top:906.9px;line-height:15px;color:#d4d4d4">      <span style="color:#da70d6">}</span><span style="color:#ffd700">)</span>;</div>
<div class="a mono" style="left:-17px;top:921.3px;width:50px;text-align:right;font-size:10px;line-height:15px;color:#6e7681">68</div>
<div class="a mono code" style="left:55.5px;top:921.9px;line-height:15px;color:#d4d4d4">    <span style="color:#179fff">}</span> <span style="color:#c586c0">catch</span> <span style="color:#179fff">(</span><span style="color:#9cdcfe">error</span><span style="color:#179fff">)</span> <span style="color:#179fff">{</span></div>
<div class="a mono" style="left:-17px;top:936.3px;width:50px;text-align:right;font-size:10px;line-height:15px;color:#6e7681">69</div>
<div class="a mono code" style="left:55.5px;top:936.9px;line-height:15px;color:#d4d4d4">      <span style="color:#c586c0">throw</span> <span style="color:#569cd6">new</span> <span style="color:#4ec9b0">Error</span><span style="color:#ffd700">(</span><span style="color:#ce9178">`JWT token generation failed: </span><span style="color:#569cd6">${</span><span style="color:#9cdcfe">error</span><span style="color:#569cd6">}</span><span style="color:#ce9178">`</span><span style="color:#ffd700">)</span>;</div>
<div class="a mono" style="left:-17px;top:951.3px;width:50px;text-align:right;font-size:10px;line-height:15px;color:#6e7681">70</div>
<div class="a mono code" style="left:55.5px;top:951.9px;line-height:15px;color:#d4d4d4">    <span style="color:#179fff">}</span></div>
<div class="a mono" style="left:-17px;top:966.3px;width:50px;text-align:right;font-size:10px;line-height:15px;color:#6e7681">71</div>
<div class="a mono code" style="left:55.5px;top:966.9px;line-height:15px;color:#d4d4d4">  <span style="color:#da70d6">}</span></div>
<div class="a ui" style="left:55px;top:9.5px;font-size:8.95px;line-height:11px;color:#999999">You, 37 minutes ago | 1 author (You)</div>
<div class="a mono" style="left:416px;top:351.3px;font-size:10px;line-height:15px;color:#5a5a5a">You, 37 minutes ago • Uncommitted changes</div>
<div class="a" style="left:380.0px;top:351px;width:1px;height:14px;background:#aeafad"></div>
<div class="a" style="left:103.0px;top:276px;width:7px;height:14px;border:1px solid #888888"></div>
<div class="a" style="left:79.0px;top:546px;width:7px;height:14px;border:1px solid #888888"></div>
</div>
<div class="a" style="left:315px;top:52px;width:1037px;height:3px;background:linear-gradient(#0c0c0c,rgba(0,0,0,0))"></div>
<div class="a" style="left:1353px;top:33px;width:558px;height:0px;"></div>
<div class="a ui" style="left:1370px;top:12px;font-size:9.6px;color:#9d9d9d">CHAT</div>
<div class="a ui" style="left:1415px;top:12px;font-size:9.6px;color:#e7e7e7;letter-spacing:-0.4px">TERMINAL</div>
<div class="a" style="left:1413px;top:27px;width:50px;height:1px;background:#0078d4"></div>
<div class="a" style="left:1353px;top:34px;width:555px;height:992px;overflow:hidden">
<div class="a mono term" style="left:17px;top:13.3px;line-height:12px;color:#dcdcdc"><span style="color:#8e8e8e">&gt; /bug-create is running… validate-password &quot;Password must be 8 characters long and</span></div>
<div class="a mono term" style="left:17px;top:25.3px;line-height:12px;color:#dcdcdc"><span style="color:#8e8e8e">include lowercase letters, uppercase letters, numbers, and special characters.&quot;</span></div>
<div class="a" style="left:17.2px;top:50.900000000000006px;width:6.2px;height:6.2px;border-radius:50%;background:#ffffff"></div>
<div class="a mono term" style="left:17px;top:49.3px;line-height:12px;color:#dcdcdc">  I&#x27;ll help you create a new bug fix workflow for password validation. Let me start</div>
<div class="a mono term" style="left:17px;top:61.3px;line-height:12px;color:#dcdcdc">  by setting up the directory structure and loading the necessary context.</div>
<div class="a" style="left:17.2px;top:86.9px;width:6.2px;height:6.2px;border-radius:50%;background:#4eba65"></div>
<div class="a mono term" style="left:17px;top:85.3px;line-height:12px;color:#dcdcdc">  <span style="color:#e6e6e6;font-weight:bold">Bash</span>(mkdir -p .claude/bugs/validate-password)</div>
<div class="a" style="left:33px;top:97px;width:6px;height:11px;border-left:1.5px solid #767676;border-bottom:1.5px solid #767676"></div>
<div class="a mono term" style="left:17px;top:97.3px;line-height:12px;color:#dcdcdc">     <span style="color:#8a8a8a">(No content)</span></div>
<div class="a" style="left:17.2px;top:122.9px;width:6.2px;height:6.2px;border-radius:50%;background:#4eba65"></div>
<div class="a mono term" style="left:17px;top:121.3px;line-height:12px;color:#dcdcdc">  <span style="color:#e6e6e6;font-weight:bold">Write</span>(.claude/bugs/validate-password/report.md)</div>
<div class="a" style="left:33px;top:133px;width:6px;height:11px;border-left:1.5px solid #767676;border-bottom:1.5px solid #767676"></div>
<div class="a mono term" style="left:17px;top:133.3px;line-height:12px;color:#dcdcdc">     Wrote <span style="color:#e6e6e6;font-weight:bold">16</span> lines to <span style="color:#e6e6e6;font-weight:bold">.claude/bugs/validate-password/report.md</span></div>
<div class="a mono term" style="left:17px;top:145.3px;line-height:12px;color:#dcdcdc">     # Bug Report - Password Validation</div>
<div class="a mono term" style="left:17px;top:157.3px;line-height:12px;color:#dcdcdc">     ## Overview</div>
<div class="a mono term" style="left:17px;top:169.3px;line-height:12px;color:#dcdcdc">     This document describes the bug related to password validation requirements.</div>
<div class="a mono term" style="left:17px;top:181.3px;line-height:12px;color:#dcdcdc">     ## Bug Details</div>
<div class="a mono term" style="left:17px;top:193.3px;line-height:12px;color:#dcdcdc">     ## Steps to Reproduce</div>
<div class="a mono term" style="left:17px;top:205.3px;line-height:12px;color:#dcdcdc">     ## Expected Behavior</div>
<div class="a mono term" style="left:17px;top:217.3px;line-height:12px;color:#dcdcdc">     <span style="color:#8a8a8a">… +6 lines (ctrl+o to expand)</span></div>
<div class="a" style="left:17.2px;top:242.89999999999998px;width:6.2px;height:6.2px;border-radius:50%;background:#4eba65"></div>
<div class="a mono term" style="left:17px;top:241.3px;line-height:12px;color:#dcdcdc">  <span style="color:#e6e6e6;font-weight:bold">Write</span>(.claude/bugs/validate-password/analysis.md)</div>
<div class="a" style="left:33px;top:253px;width:6px;height:11px;border-left:1.5px solid #767676;border-bottom:1.5px solid #767676"></div>
<div class="a mono term" style="left:17px;top:253.3px;line-height:12px;color:#dcdcdc">     Wrote <span style="color:#e6e6e6;font-weight:bold">11</span> lines to <span style="color:#e6e6e6;font-weight:bold">.claude/bugs/validate-password/analysis.md</span></div>
<div class="a mono term" style="left:17px;top:265.3px;line-height:12px;color:#dcdcdc">     # Bug Analysis - Password Validation</div>
<div class="a mono term" style="left:17px;top:277.3px;line-height:12px;color:#dcdcdc">     ## Root Cause Analysis</div>
<div class="a mono term" style="left:17px;top:289.3px;line-height:12px;color:#dcdcdc">     ## Code Investigation</div>
<div class="a mono term" style="left:17px;top:301.3px;line-height:12px;color:#dcdcdc">     ## Dependencies</div>
<div class="a mono term" style="left:17px;top:313.3px;line-height:12px;color:#dcdcdc">     ## Risk Assessment</div>
<div class="a mono term" style="left:17px;top:325.3px;line-height:12px;color:#dcdcdc">     <span style="color:#8a8a8a">… +1 line (ctrl+o to expand)</span></div>
<div class="a" style="left:17.2px;top:350.9px;width:6.2px;height:6.2px;border-radius:50%;background:#4eba65"></div>
<div class="a mono term" style="left:17px;top:349.3px;line-height:12px;color:#dcdcdc">  <span style="color:#e6e6e6;font-weight:bold">Write</span>(.claude/bugs/validate-password/verification.md)</div>
<div class="a" style="left:33px;top:361px;width:6px;height:11px;border-left:1.5px solid #767676;border-bottom:1.5px solid #767676"></div>
<div class="a mono term" style="left:17px;top:361.3px;line-height:12px;color:#dcdcdc">     Wrote <span style="color:#e6e6e6;font-weight:bold">11</span> lines to <span style="color:#e6e6e6;font-weight:bold">.claude/bugs/validate-password/verification.md</span></div>
<div class="a mono term" style="left:17px;top:373.3px;line-height:12px;color:#dcdcdc">     # Bug Verification - Password Validation</div>
<div class="a mono term" style="left:17px;top:385.3px;line-height:12px;color:#dcdcdc">     ## Test Results</div>
<div class="a mono term" style="left:17px;top:397.3px;line-height:12px;color:#dcdcdc">     ## Manual Testing</div>
<div class="a mono term" style="left:17px;top:409.3px;line-height:12px;color:#dcdcdc">     ## Automated Testing</div>
<div class="a mono term" style="left:17px;top:421.3px;line-height:12px;color:#dcdcdc">     ## Performance Impact</div>
<div class="a mono term" style="left:17px;top:433.3px;line-height:12px;color:#dcdcdc">     <span style="color:#8a8a8a">… +1 line (ctrl+o to expand)</span></div>
<div class="a" style="left:17.2px;top:458.9px;width:6.2px;height:6.2px;border-radius:50%;background:#4eba65"></div>
<div class="a mono term" style="left:17px;top:457.3px;line-height:12px;color:#dcdcdc">  <span style="color:#e6e6e6;font-weight:bold">Bash</span>(claude-code-spec-workflow get-steering-context)</div>
<div class="a" style="left:33px;top:469px;width:6px;height:11px;border-left:1.5px solid #767676;border-bottom:1.5px solid #767676"></div>
<div class="a mono term" style="left:17px;top:469.3px;line-height:12px;color:#dcdcdc">     ## Steering Documents Context</div>
<div class="a mono term" style="left:17px;top:493.3px;line-height:12px;color:#dcdcdc">     No steering documents found or all are empty.</div>
<div class="a" style="left:17.2px;top:518.9px;width:6.2px;height:6.2px;border-radius:50%;background:#4eba65"></div>
<div class="a mono term" style="left:17px;top:517.3px;line-height:12px;color:#dcdcdc">  <span style="color:#e6e6e6;font-weight:bold">Bash</span>(claude-code-spec-workflow get-template-context bug)</div>
<div class="a" style="left:33px;top:529px;width:6px;height:11px;border-left:1.5px solid #767676;border-bottom:1.5px solid #767676"></div>
<div class="a mono term" style="left:17px;top:529.3px;line-height:12px;color:#dcdcdc">     ## Template Context (Pre-loaded) (bug)</div>
<div class="a mono term" style="left:17px;top:553.3px;line-height:12px;color:#dcdcdc">     ### Bug Report Template</div>
<div class="a mono term" style="left:17px;top:565.3px;line-height:12px;color:#dcdcdc">     <span style="color:#8a8a8a">… +212 lines (ctrl+o to expand)</span></div>
<div class="a" style="left:17.2px;top:590.9px;width:6.2px;height:6.2px;border-radius:50%;background:#ffffff"></div>
<div class="a mono term" style="left:17px;top:589.3px;line-height:12px;color:#dcdcdc">  Now let me analyze the current password validation implementation to understand the</div>
<div class="a mono term" style="left:17px;top:601.3px;line-height:12px;color:#dcdcdc">   bug:</div>
<div class="a" style="left:17.2px;top:626.9px;width:6.2px;height:6.2px;border-radius:50%;background:#4eba65"></div>
<div class="a mono term" style="left:17px;top:625.3px;line-height:12px;color:#dcdcdc">  <span style="color:#e6e6e6;font-weight:bold">Read</span>(src/auth/dto/signup.dto.ts)</div>
<div class="a" style="left:33px;top:637px;width:6px;height:11px;border-left:1.5px solid #767676;border-bottom:1.5px solid #767676"></div>
<div class="a mono term" style="left:17px;top:637.3px;line-height:12px;color:#dcdcdc">     Read <span style="color:#e6e6e6;font-weight:bold">11</span> lines <span style="color:#8a8a8a">(ctrl+o to expand)</span></div>
<div class="a" style="left:17.2px;top:662.9px;width:6.2px;height:6.2px;border-radius:50%;background:#ffffff"></div>
<div class="a mono term" style="left:17px;top:661.3px;line-height:12px;color:#dcdcdc">  I can see the issue! The current password validation only checks for minimum length</div>
<div class="a mono term" style="left:17px;top:673.3px;line-height:12px;color:#dcdcdc">   (8 characters) but doesn&#x27;t validate for the complexity requirements mentioned in</div>
<div class="a mono term" style="left:17px;top:685.3px;line-height:12px;color:#dcdcdc">  the bug description. Let me create a comprehensive bug report:</div>
<div class="a" style="left:17.2px;top:710.9px;width:6.2px;height:6.2px;border-radius:50%;background:#4eba65"></div>
<div class="a mono term" style="left:17px;top:709.3px;line-height:12px;color:#dcdcdc">  <span style="color:#e6e6e6;font-weight:bold">Update</span>(.claude/bugs/validate-password/report.md)</div>
<div class="a" style="left:33px;top:721px;width:6px;height:11px;border-left:1.5px solid #767676;border-bottom:1.5px solid #767676"></div>
<div class="a mono term" style="left:17px;top:721.3px;line-height:12px;color:#dcdcdc">     Updated <span style="color:#e6e6e6;font-weight:bold">.claude/bugs/validate-password/report.md</span> with <span style="color:#e6e6e6;font-weight:bold">61</span> additions and <span style="color:#e6e6e6;font-weight:bold">7</span></div>
<div class="a mono term" style="left:17px;top:733.3px;line-height:12px;color:#dcdcdc">     removals</div>
<div class="a mono term" style="left:17px;top:745.3px;line-height:12px;color:#dcdcdc">        <span style="color:#8a8a8a">1</span>    # Bug Report - Password Validation</div>
<div class="a mono term" style="left:17px;top:757.3px;line-height:12px;color:#dcdcdc">        <span style="color:#8a8a8a">2</span></div>
<div class="a mono term" style="left:17px;top:769.3px;line-height:12px;color:#dcdcdc">        <span style="color:#8a8a8a">3</span> <span style="background:#722b33;color:#f0f0f0">-  ## Overview</span></div>
<div class="a mono term" style="left:17px;top:781.3px;line-height:12px;color:#dcdcdc">        <span style="color:#8a8a8a">4</span> <span style="background:#722b33;color:#f0f0f0">-  This document describes the bug related to password validation </span></div>
<div class="a mono term" style="left:17px;top:793.3px;line-height:12px;color:#dcdcdc">          <span style="background:#722b33;color:#f0f0f0">- requirements.</span></div>
<div class="a mono term" style="left:17px;top:805.3px;line-height:12px;color:#dcdcdc">        <span style="color:#8a8a8a">3</span> <span style="background:#27532b;color:#f0f0f0">+  ## Bug Summary</span></div>
<div class="a mono term" style="left:17px;top:817.3px;line-height:12px;color:#dcdcdc">        <span style="color:#8a8a8a">4</span> <span style="background:#27532b;color:#f0f0f0">+  Password validation is insufficient - currently only validates </span></div>
<div class="a mono term" style="left:17px;top:829.3px;line-height:12px;color:#dcdcdc">          <span style="background:#27532b;color:#f0f0f0">+ minimum length (8 characters) but does not enforce complexity </span></div>
<div class="a mono term" style="left:17px;top:841.3px;line-height:12px;color:#dcdcdc">          <span style="background:#27532b;color:#f0f0f0">+ requirements for lowercase letters, uppercase letters, numbers, and </span></div>
<div class="a mono term" style="left:17px;top:853.3px;line-height:12px;color:#dcdcdc">          <span style="background:#27532b;color:#f0f0f0">+ special characters as specified in the requirements.</span></div>
<div class="a mono term" style="left:17px;top:865.3px;line-height:12px;color:#dcdcdc">        <span style="color:#8a8a8a">5</span></div>
<div class="a mono term" style="left:17px;top:877.3px;line-height:12px;color:#dcdcdc">        <span style="color:#8a8a8a">6</span>    ## Bug Details</div>
<div class="a mono term" style="left:17px;top:889.3px;line-height:12px;color:#dcdcdc">        <span style="color:#8a8a8a">7</span></div>
<div class="a mono term" style="left:17px;top:901.3px;line-height:12px;color:#dcdcdc">        <span style="color:#8a8a8a">8</span> <span style="background:#722b33;color:#f0f0f0">-  ## Steps to Reproduce</span></div>
<div class="a mono term" style="left:17px;top:913.3px;line-height:12px;color:#dcdcdc">        <span style="color:#8a8a8a">8</span> <span style="background:#27532b;color:#f0f0f0">+  ### Expected Behavior</span></div>
<div class="a mono term" style="left:17px;top:925.3px;line-height:12px;color:#dcdcdc">        <span style="color:#8a8a8a">9</span> <span style="background:#27532b;color:#f0f0f0">+  Password validation should enforce all of the following requirements:</span></div>
<div class="a mono term" style="left:17px;top:937.3px;line-height:12px;color:#dcdcdc">       <span style="color:#8a8a8a">10</span> <span style="background:#27532b;color:#f0f0f0">+  - Minimum 8 characters long</span></div>
<div class="a mono term" style="left:17px;top:949.3px;line-height:12px;color:#dcdcdc">       <span style="color:#8a8a8a">11</span> <span style="background:#27532b;color:#f0f0f0">+  - Contains at least one lowercase letter (a-z)</span></div>
<div class="a mono term" style="left:17px;top:961.3px;line-height:12px;color:#dcdcdc">       <span style="color:#8a8a8a">12</span> <span style="background:#27532b;color:#f0f0f0">+  - Contains at least one uppercase letter (A-Z)</span></div>
<div class="a mono term" style="left:17px;top:973.3px;line-height:12px;color:#dcdcdc">       <span style="color:#8a8a8a">13</span> <span style="background:#27532b;color:#f0f0f0">+  - Contains at least one number (0-9)</span></div>
<div class="a mono term" style="left:17px;top:985.3px;line-height:12px;color:#dcdcdc">       <span style="color:#8a8a8a">14</span> <span style="background:#27532b;color:#f0f0f0">+  - Contains at least one special character</span></div>
</div>
<div class="a" style="left:1908px;top:34px;width:3px;height:992px;background:#111111"></div>
<svg class="a" style="left:1229px;top:52px" width="112" height="150" viewBox="0 0 112 150" shape-rendering="crispEdges"><rect x="0" y="0" width="6" height="1" fill="#8f658c"/><rect x="7" y="0" width="1" height="1" fill="#b79c09"/><rect x="9" y="0" width="10" height="1" fill="#749fb6"/><rect x="19" y="0" width="1" height="1" fill="#9a9a9a"/><rect x="21" y="0" width="28" height="1" fill="#749fb6"/><rect x="50" y="0" width="1" height="1" fill="#b79c09"/><rect x="52" y="0" width="4" height="1" fill="#8f658c"/><rect x="57" y="0" width="16" height="1" fill="#966c5b"/><rect x="73" y="0" width="1" height="1" fill="#9a9a9a"/><rect x="0" y="2" width="6" height="1" fill="#8f658c"/><rect x="7" y="2" width="1" height="1" fill="#b79c09"/><rect x="9" y="2" width="10" height="1" fill="#749fb6"/><rect x="20" y="2" width="1" height="1" fill="#b79c09"/><rect x="22" y="2" width="4" height="1" fill="#8f658c"/><rect x="27" y="2" width="13" height="1" fill="#966c5b"/><rect x="40" y="2" width="1" height="1" fill="#9a9a9a"/><rect x="0" y="4" width="6" height="1" fill="#8f658c"/><rect x="7" y="4" width="1" height="1" fill="#b79c09"/><rect x="9" y="4" width="11" height="1" fill="#749fb6"/><rect x="21" y="4" width="1" height="1" fill="#b79c09"/><rect x="23" y="4" width="4" height="1" fill="#8f658c"/><rect x="28" y="4" width="22" height="1" fill="#966c5b"/><rect x="50" y="4" width="1" height="1" fill="#9a9a9a"/><rect x="0" y="6" width="6" height="1" fill="#8f658c"/><rect x="7" y="6" width="1" height="1" fill="#b79c09"/><rect x="9" y="6" width="9" height="1" fill="#749fb6"/><rect x="19" y="6" width="1" height="1" fill="#b79c09"/><rect x="21" y="6" width="4" height="1" fill="#8f658c"/><rect x="26" y="6" width="18" height="1" fill="#966c5b"/><rect x="44" y="6" width="1" height="1" fill="#9a9a9a"/><rect x="0" y="8" width="6" height="1" fill="#8f658c"/><rect x="7" y="8" width="1" height="1" fill="#b79c09"/><rect x="9" y="8" width="17" height="1" fill="#749fb6"/><rect x="26" y="8" width="1" height="1" fill="#9a9a9a"/><rect x="28" y="8" width="15" height="1" fill="#749fb6"/><rect x="44" y="8" width="1" height="1" fill="#b79c09"/><rect x="46" y="8" width="4" height="1" fill="#8f658c"/><rect x="51" y="8" width="27" height="1" fill="#966c5b"/><rect x="78" y="8" width="1" height="1" fill="#9a9a9a"/><rect x="0" y="10" width="6" height="1" fill="#8f658c"/><rect x="7" y="10" width="1" height="1" fill="#b79c09"/><rect x="9" y="10" width="4" height="1" fill="#749fb6"/><rect x="14" y="10" width="1" height="1" fill="#b79c09"/><rect x="16" y="10" width="4" height="1" fill="#8f658c"/><rect x="21" y="10" width="25" height="1" fill="#966c5b"/><rect x="46" y="10" width="1" height="1" fill="#9a9a9a"/><rect x="0" y="14" width="1" height="1" fill="#9a9a9a"/><rect x="1" y="14" width="10" height="1" fill="#9f9f7d"/><rect x="11" y="14" width="2" height="1" fill="#b79c09"/><rect x="0" y="16" width="6" height="1" fill="#8f658c"/><rect x="7" y="16" width="5" height="1" fill="#44749b"/><rect x="13" y="16" width="11" height="1" fill="#3e9281"/><rect x="25" y="16" width="1" height="1" fill="#b79c09"/><rect x="2" y="18" width="11" height="1" fill="#44749b"/><rect x="13" y="18" width="1" height="1" fill="#9e569b"/><rect x="4" y="20" width="7" height="1" fill="#44749b"/><rect x="12" y="20" width="8" height="1" fill="#44749b"/><rect x="21" y="20" width="11" height="1" fill="#749fb6"/><rect x="32" y="20" width="1" height="1" fill="#9a9a9a"/><rect x="34" y="20" width="11" height="1" fill="#3e9281"/><rect x="45" y="20" width="1" height="1" fill="#9a9a9a"/><rect x="4" y="22" width="7" height="1" fill="#44749b"/><rect x="12" y="22" width="8" height="1" fill="#44749b"/><rect x="21" y="22" width="10" height="1" fill="#749fb6"/><rect x="31" y="22" width="1" height="1" fill="#9a9a9a"/><rect x="33" y="22" width="10" height="1" fill="#3e9281"/><rect x="43" y="22" width="1" height="1" fill="#9a9a9a"/><rect x="2" y="24" width="1" height="1" fill="#9e569b"/><rect x="4" y="24" width="2" height="1" fill="#9e569b"/><rect x="2" y="28" width="3" height="1" fill="#527143"/><rect x="3" y="30" width="1" height="1" fill="#527143"/><rect x="5" y="30" width="7" height="1" fill="#527143"/><rect x="13" y="30" width="4" height="1" fill="#527143"/><rect x="18" y="30" width="6" height="1" fill="#527143"/><rect x="25" y="30" width="4" height="1" fill="#527143"/><rect x="30" y="30" width="5" height="1" fill="#527143"/><rect x="36" y="30" width="11" height="1" fill="#527143"/><rect x="48" y="30" width="8" height="1" fill="#527143"/><rect x="57" y="30" width="3" height="1" fill="#527143"/><rect x="61" y="30" width="3" height="1" fill="#527143"/><rect x="65" y="30" width="5" height="1" fill="#527143"/><rect x="71" y="30" width="10" height="1" fill="#527143"/><rect x="3" y="32" width="1" height="1" fill="#527143"/><rect x="5" y="32" width="6" height="1" fill="#44749b"/><rect x="12" y="32" width="9" height="1" fill="#749fb6"/><rect x="22" y="32" width="1" height="1" fill="#527143"/><rect x="24" y="32" width="8" height="1" fill="#527143"/><rect x="33" y="32" width="5" height="1" fill="#527143"/><rect x="39" y="32" width="3" height="1" fill="#527143"/><rect x="43" y="32" width="8" height="1" fill="#527143"/><rect x="52" y="32" width="3" height="1" fill="#527143"/><rect x="56" y="32" width="3" height="1" fill="#527143"/><rect x="60" y="32" width="4" height="1" fill="#527143"/><rect x="65" y="32" width="7" height="1" fill="#527143"/><rect x="3" y="34" width="1" height="1" fill="#527143"/><rect x="5" y="34" width="8" height="1" fill="#44749b"/><rect x="14" y="34" width="26" height="1" fill="#527143"/><rect x="41" y="34" width="1" height="1" fill="#527143"/><rect x="43" y="34" width="4" height="1" fill="#527143"/><rect x="48" y="34" width="4" height="1" fill="#527143"/><rect x="53" y="34" width="3" height="1" fill="#527143"/><rect x="57" y="34" width="3" height="1" fill="#527143"/><rect x="61" y="34" width="6" height="1" fill="#527143"/><rect x="68" y="34" width="5" height="1" fill="#527143"/><rect x="3" y="36" width="1" height="1" fill="#527143"/><rect x="5" y="36" width="7" height="1" fill="#44749b"/><rect x="13" y="36" width="17" height="1" fill="#527143"/><rect x="31" y="36" width="2" height="1" fill="#527143"/><rect x="34" y="36" width="5" height="1" fill="#527143"/><rect x="40" y="36" width="7" height="1" fill="#527143"/><rect x="48" y="36" width="6" height="1" fill="#527143"/><rect x="3" y="38" width="1" height="1" fill="#527143"/><rect x="5" y="38" width="7" height="1" fill="#44749b"/><rect x="13" y="38" width="28" height="1" fill="#527143"/><rect x="42" y="38" width="2" height="1" fill="#527143"/><rect x="45" y="38" width="4" height="1" fill="#527143"/><rect x="50" y="38" width="8" height="1" fill="#527143"/><rect x="59" y="38" width="2" height="1" fill="#527143"/><rect x="62" y="38" width="5" height="1" fill="#527143"/><rect x="68" y="38" width="10" height="1" fill="#527143"/><rect x="79" y="38" width="5" height="1" fill="#527143"/><rect x="3" y="40" width="2" height="1" fill="#527143"/><rect x="2" y="42" width="5" height="1" fill="#44749b"/><rect x="8" y="42" width="6" height="1" fill="#9f9f7d"/><rect x="14" y="42" width="1" height="1" fill="#9e569b"/><rect x="15" y="42" width="9" height="1" fill="#749fb6"/><rect x="24" y="42" width="1" height="1" fill="#9a9a9a"/><rect x="26" y="42" width="9" height="1" fill="#3e9281"/><rect x="35" y="42" width="1" height="1" fill="#9e569b"/><rect x="36" y="42" width="1" height="1" fill="#9a9a9a"/><rect x="38" y="42" width="7" height="1" fill="#3e9281"/><rect x="45" y="42" width="1" height="1" fill="#9e569b"/><rect x="46" y="42" width="17" height="1" fill="#3e9281"/><rect x="63" y="42" width="1" height="1" fill="#9e569b"/><rect x="65" y="42" width="1" height="1" fill="#9e569b"/><rect x="4" y="44" width="5" height="1" fill="#44749b"/><rect x="10" y="44" width="1" height="1" fill="#1976b7"/><rect x="12" y="44" width="5" height="1" fill="#3f8db7"/><rect x="17" y="44" width="1" height="1" fill="#9a9a9a"/><rect x="19" y="44" width="8" height="1" fill="#3f8db7"/><rect x="28" y="44" width="1" height="1" fill="#1976b7"/><rect x="30" y="44" width="1" height="1" fill="#9a9a9a"/><rect x="32" y="44" width="9" height="1" fill="#749fb6"/><rect x="41" y="44" width="1" height="1" fill="#9a9a9a"/><rect x="4" y="48" width="3" height="1" fill="#8f658c"/><rect x="8" y="48" width="1" height="1" fill="#1976b7"/><rect x="6" y="50" width="2" height="1" fill="#527143"/><rect x="9" y="50" width="6" height="1" fill="#527143"/><rect x="16" y="50" width="3" height="1" fill="#527143"/><rect x="20" y="50" width="4" height="1" fill="#527143"/><rect x="25" y="50" width="7" height="1" fill="#527143"/><rect x="33" y="50" width="1" height="1" fill="#527143"/><rect x="35" y="50" width="11" height="1" fill="#527143"/><rect x="47" y="50" width="7" height="1" fill="#527143"/><rect x="55" y="50" width="5" height="1" fill="#527143"/><rect x="61" y="50" width="11" height="1" fill="#527143"/><rect x="73" y="50" width="8" height="1" fill="#527143"/><rect x="6" y="52" width="5" height="1" fill="#44749b"/><rect x="12" y="52" width="4" height="1" fill="#3f8db7"/><rect x="17" y="52" width="1" height="1" fill="#9a9a9a"/><rect x="19" y="52" width="5" height="1" fill="#8f658c"/><rect x="25" y="52" width="4" height="1" fill="#44749b"/><rect x="29" y="52" width="1" height="1" fill="#9a9a9a"/><rect x="30" y="52" width="11" height="1" fill="#3f8db7"/><rect x="41" y="52" width="1" height="1" fill="#9a9a9a"/><rect x="42" y="52" width="10" height="1" fill="#9f9f7d"/><rect x="52" y="52" width="1" height="1" fill="#b79c09"/><rect x="53" y="52" width="5" height="1" fill="#749fb6"/><rect x="58" y="52" width="1" height="1" fill="#9a9a9a"/><rect x="60" y="52" width="8" height="1" fill="#3f8db7"/><rect x="68" y="52" width="1" height="1" fill="#b79c09"/><rect x="69" y="52" width="1" height="1" fill="#9a9a9a"/><rect x="6" y="56" width="2" height="1" fill="#527143"/><rect x="9" y="56" width="8" height="1" fill="#527143"/><rect x="18" y="56" width="3" height="1" fill="#527143"/><rect x="22" y="56" width="5" height="1" fill="#527143"/><rect x="28" y="56" width="4" height="1" fill="#527143"/><rect x="33" y="56" width="7" height="1" fill="#527143"/><rect x="41" y="56" width="10" height="1" fill="#527143"/><rect x="6" y="58" width="5" height="1" fill="#44749b"/><rect x="12" y="58" width="5" height="1" fill="#3f8db7"/><rect x="18" y="58" width="1" height="1" fill="#9a9a9a"/><rect x="20" y="58" width="5" height="1" fill="#8f658c"/><rect x="26" y="58" width="4" height="1" fill="#44749b"/><rect x="30" y="58" width="1" height="1" fill="#9a9a9a"/><rect x="31" y="58" width="16" height="1" fill="#9f9f7d"/><rect x="47" y="58" width="1" height="1" fill="#b79c09"/><rect x="48" y="58" width="4" height="1" fill="#3f8db7"/><rect x="52" y="58" width="1" height="1" fill="#b79c09"/><rect x="53" y="58" width="1" height="1" fill="#9a9a9a"/><rect x="6" y="62" width="2" height="1" fill="#527143"/><rect x="9" y="62" width="9" height="1" fill="#527143"/><rect x="19" y="62" width="4" height="1" fill="#527143"/><rect x="24" y="62" width="6" height="1" fill="#527143"/><rect x="31" y="62" width="2" height="1" fill="#527143"/><rect x="34" y="62" width="8" height="1" fill="#527143"/><rect x="43" y="62" width="3" height="1" fill="#527143"/><rect x="6" y="64" width="5" height="1" fill="#44749b"/><rect x="12" y="64" width="12" height="1" fill="#3f8db7"/><rect x="24" y="64" width="1" height="1" fill="#9a9a9a"/><rect x="26" y="64" width="15" height="1" fill="#3e9281"/><rect x="42" y="64" width="1" height="1" fill="#9a9a9a"/><rect x="44" y="64" width="1" height="1" fill="#b79c09"/><rect x="8" y="66" width="2" height="1" fill="#749fb6"/><rect x="10" y="66" width="1" height="1" fill="#9a9a9a"/><rect x="12" y="66" width="4" height="1" fill="#3f8db7"/><rect x="16" y="66" width="1" height="1" fill="#9a9a9a"/><rect x="17" y="66" width="2" height="1" fill="#749fb6"/><rect x="19" y="66" width="1" height="1" fill="#9a9a9a"/><rect x="8" y="68" width="5" height="1" fill="#749fb6"/><rect x="13" y="68" width="1" height="1" fill="#9a9a9a"/><rect x="15" y="68" width="4" height="1" fill="#3f8db7"/><rect x="19" y="68" width="1" height="1" fill="#9a9a9a"/><rect x="20" y="68" width="5" height="1" fill="#749fb6"/><rect x="25" y="68" width="1" height="1" fill="#9a9a9a"/><rect x="8" y="70" width="9" height="1" fill="#749fb6"/><rect x="17" y="70" width="1" height="1" fill="#9a9a9a"/><rect x="19" y="70" width="4" height="1" fill="#3f8db7"/><rect x="23" y="70" width="1" height="1" fill="#9a9a9a"/><rect x="24" y="70" width="9" height="1" fill="#749fb6"/><rect x="33" y="70" width="1" height="1" fill="#9a9a9a"/><rect x="6" y="72" width="1" height="1" fill="#b79c09"/><rect x="7" y="72" width="1" height="1" fill="#9a9a9a"/><rect x="6" y="76" width="6" height="1" fill="#8f658c"/><rect x="13" y="76" width="1" height="1" fill="#b79c09"/><rect x="8" y="78" width="4" height="1" fill="#749fb6"/><rect x="12" y="78" width="1" height="1" fill="#9a9a9a"/><rect x="14" y="78" width="12" height="1" fill="#3f8db7"/><rect x="26" y="78" width="1" height="1" fill="#9a9a9a"/><rect x="8" y="80" width="11" height="1" fill="#749fb6"/><rect x="19" y="80" width="1" height="1" fill="#9a9a9a"/><rect x="21" y="80" width="5" height="1" fill="#3f8db7"/><rect x="26" y="80" width="1" height="1" fill="#9a9a9a"/><rect x="6" y="82" width="1" height="1" fill="#b79c09"/><rect x="7" y="82" width="1" height="1" fill="#9a9a9a"/><rect x="4" y="84" width="1" height="1" fill="#1976b7"/><rect x="6" y="84" width="5" height="1" fill="#8f658c"/><rect x="12" y="84" width="1" height="1" fill="#1976b7"/><rect x="6" y="86" width="2" height="1" fill="#527143"/><rect x="9" y="86" width="6" height="1" fill="#527143"/><rect x="16" y="86" width="10" height="1" fill="#527143"/><rect x="27" y="86" width="6" height="1" fill="#527143"/><rect x="6" y="88" width="5" height="1" fill="#8f658c"/><rect x="12" y="88" width="3" height="1" fill="#44749b"/><rect x="16" y="88" width="28" height="1" fill="#3e9281"/><rect x="44" y="88" width="1" height="1" fill="#b79c09"/><rect x="8" y="90" width="9" height="1" fill="#966c5b"/><rect x="18" y="90" width="6" height="1" fill="#966c5b"/><rect x="25" y="90" width="5" height="1" fill="#966c5b"/><rect x="31" y="90" width="8" height="1" fill="#966c5b"/><rect x="40" y="90" width="6" height="1" fill="#966c5b"/><rect x="47" y="90" width="7" height="1" fill="#966c5b"/><rect x="54" y="90" width="1" height="1" fill="#9a9a9a"/><rect x="6" y="92" width="1" height="1" fill="#b79c09"/><rect x="7" y="92" width="1" height="1" fill="#9a9a9a"/><rect x="4" y="94" width="1" height="1" fill="#1976b7"/><rect x="2" y="96" width="1" height="1" fill="#9e569b"/><rect x="2" y="100" width="3" height="1" fill="#527143"/><rect x="3" y="102" width="1" height="1" fill="#527143"/><rect x="5" y="102" width="9" height="1" fill="#527143"/><rect x="15" y="102" width="3" height="1" fill="#527143"/><rect x="19" y="102" width="5" height="1" fill="#527143"/><rect x="25" y="102" width="4" height="1" fill="#527143"/><rect x="30" y="102" width="4" height="1" fill="#527143"/><rect x="35" y="102" width="2" height="1" fill="#527143"/><rect x="38" y="102" width="3" height="1" fill="#527143"/><rect x="42" y="102" width="5" height="1" fill="#527143"/><rect x="48" y="102" width="7" height="1" fill="#527143"/><rect x="3" y="104" width="1" height="1" fill="#527143"/><rect x="5" y="104" width="6" height="1" fill="#44749b"/><rect x="12" y="104" width="4" height="1" fill="#749fb6"/><rect x="17" y="104" width="1" height="1" fill="#527143"/><rect x="19" y="104" width="4" height="1" fill="#527143"/><rect x="24" y="104" width="6" height="1" fill="#527143"/><rect x="31" y="104" width="10" height="1" fill="#527143"/><rect x="42" y="104" width="2" height="1" fill="#527143"/><rect x="45" y="104" width="3" height="1" fill="#527143"/><rect x="49" y="104" width="5" height="1" fill="#527143"/><rect x="3" y="106" width="1" height="1" fill="#527143"/><rect x="5" y="106" width="8" height="1" fill="#44749b"/><rect x="14" y="106" width="15" height="1" fill="#527143"/><rect x="30" y="106" width="1" height="1" fill="#527143"/><rect x="32" y="106" width="3" height="1" fill="#527143"/><rect x="36" y="106" width="6" height="1" fill="#527143"/><rect x="43" y="106" width="5" height="1" fill="#527143"/><rect x="3" y="108" width="1" height="1" fill="#527143"/><rect x="5" y="108" width="7" height="1" fill="#44749b"/><rect x="13" y="108" width="5" height="1" fill="#527143"/><rect x="19" y="108" width="2" height="1" fill="#527143"/><rect x="22" y="108" width="5" height="1" fill="#527143"/><rect x="28" y="108" width="10" height="1" fill="#527143"/><rect x="39" y="108" width="5" height="1" fill="#527143"/><rect x="3" y="110" width="2" height="1" fill="#527143"/><rect x="2" y="112" width="7" height="1" fill="#44749b"/><rect x="10" y="112" width="5" height="1" fill="#44749b"/><rect x="16" y="112" width="16" height="1" fill="#9f9f7d"/><rect x="32" y="112" width="1" height="1" fill="#9e569b"/><rect x="33" y="112" width="4" height="1" fill="#749fb6"/><rect x="37" y="112" width="1" height="1" fill="#9a9a9a"/><rect x="39" y="112" width="4" height="1" fill="#3e9281"/><rect x="43" y="112" width="1" height="1" fill="#9e569b"/><rect x="44" y="112" width="1" height="1" fill="#9a9a9a"/><rect x="46" y="112" width="7" height="1" fill="#3e9281"/><rect x="53" y="112" width="1" height="1" fill="#9e569b"/><rect x="54" y="112" width="6" height="1" fill="#3e9281"/><rect x="60" y="112" width="1" height="1" fill="#9e569b"/><rect x="62" y="112" width="1" height="1" fill="#9e569b"/><rect x="4" y="114" width="3" height="1" fill="#8f658c"/><rect x="8" y="114" width="1" height="1" fill="#1976b7"/><rect x="6" y="116" width="5" height="1" fill="#44749b"/><rect x="12" y="116" width="7" height="1" fill="#3f8db7"/><rect x="20" y="116" width="1" height="1" fill="#9a9a9a"/><rect x="22" y="116" width="1" height="1" fill="#b79c09"/><rect x="8" y="118" width="3" height="1" fill="#749fb6"/><rect x="11" y="118" width="1" height="1" fill="#9a9a9a"/><rect x="13" y="118" width="4" height="1" fill="#749fb6"/><rect x="17" y="118" width="1" height="1" fill="#9a9a9a"/><rect x="18" y="118" width="2" height="1" fill="#749fb6"/><rect x="20" y="118" width="1" height="1" fill="#9a9a9a"/><rect x="22" y="118" width="2" height="1" fill="#527143"/><rect x="25" y="118" width="8" height="1" fill="#527143"/><rect x="34" y="118" width="3" height="1" fill="#527143"/><rect x="38" y="118" width="7" height="1" fill="#527143"/><rect x="46" y="118" width="5" height="1" fill="#527143"/><rect x="8" y="120" width="5" height="1" fill="#749fb6"/><rect x="13" y="120" width="1" height="1" fill="#9a9a9a"/><rect x="15" y="120" width="4" height="1" fill="#749fb6"/><rect x="19" y="120" width="1" height="1" fill="#9a9a9a"/><rect x="20" y="120" width="5" height="1" fill="#749fb6"/><rect x="25" y="120" width="1" height="1" fill="#9a9a9a"/><rect x="6" y="122" width="1" height="1" fill="#b79c09"/><rect x="7" y="122" width="1" height="1" fill="#9a9a9a"/><rect x="6" y="126" width="2" height="1" fill="#527143"/><rect x="9" y="126" width="8" height="1" fill="#527143"/><rect x="18" y="126" width="5" height="1" fill="#527143"/><rect x="24" y="126" width="4" height="1" fill="#527143"/><rect x="29" y="126" width="7" height="1" fill="#527143"/><rect x="37" y="126" width="10" height="1" fill="#527143"/><rect x="48" y="126" width="2" height="1" fill="#527143"/><rect x="51" y="126" width="3" height="1" fill="#527143"/><rect x="55" y="126" width="12" height="1" fill="#527143"/><rect x="6" y="128" width="6" height="1" fill="#8f658c"/><rect x="13" y="128" width="5" height="1" fill="#8f658c"/><rect x="19" y="128" width="4" height="1" fill="#44749b"/><rect x="23" y="128" width="1" height="1" fill="#9a9a9a"/><rect x="24" y="128" width="10" height="1" fill="#3f8db7"/><rect x="34" y="128" width="1" height="1" fill="#9a9a9a"/><rect x="35" y="128" width="9" height="1" fill="#9f9f7d"/><rect x="44" y="128" width="1" height="1" fill="#b79c09"/><rect x="45" y="128" width="7" height="1" fill="#3f8db7"/><rect x="52" y="128" width="1" height="1" fill="#9a9a9a"/><rect x="54" y="128" width="1" height="1" fill="#9e569b"/><rect x="8" y="130" width="9" height="1" fill="#749fb6"/><rect x="17" y="130" width="1" height="1" fill="#9a9a9a"/><rect x="19" y="130" width="5" height="1" fill="#966c5b"/><rect x="24" y="130" width="1" height="1" fill="#9a9a9a"/><rect x="6" y="132" width="1" height="1" fill="#9e569b"/><rect x="7" y="132" width="1" height="1" fill="#b79c09"/><rect x="8" y="132" width="1" height="1" fill="#9a9a9a"/><rect x="4" y="134" width="1" height="1" fill="#1976b7"/><rect x="6" y="134" width="5" height="1" fill="#8f658c"/><rect x="12" y="134" width="1" height="1" fill="#1976b7"/><rect x="13" y="134" width="5" height="1" fill="#749fb6"/><rect x="18" y="134" width="1" height="1" fill="#1976b7"/><rect x="20" y="134" width="1" height="1" fill="#1976b7"/><rect x="6" y="136" width="5" height="1" fill="#8f658c"/><rect x="12" y="136" width="3" height="1" fill="#44749b"/><rect x="16" y="136" width="5" height="1" fill="#3e9281"/><rect x="21" y="136" width="1" height="1" fill="#b79c09"/><rect x="22" y="136" width="4" height="1" fill="#966c5b"/><rect x="27" y="136" width="5" height="1" fill="#966c5b"/><rect x="33" y="136" width="10" height="1" fill="#966c5b"/><rect x="44" y="136" width="7" height="1" fill="#966c5b"/><rect x="52" y="136" width="2" height="1" fill="#44749b"/><rect x="54" y="136" width="5" height="1" fill="#749fb6"/><rect x="59" y="136" width="1" height="1" fill="#44749b"/><rect x="60" y="136" width="1" height="1" fill="#966c5b"/><rect x="61" y="136" width="1" height="1" fill="#b79c09"/><rect x="62" y="136" width="1" height="1" fill="#9a9a9a"/><rect x="4" y="138" width="1" height="1" fill="#1976b7"/><rect x="2" y="140" width="1" height="1" fill="#9e569b"/><rect x="0" y="142" width="1" height="1" fill="#b79c09"/></svg>
<div class="a" style="left:1341px;top:52px;width:1px;height:974px;background:#171717"></div>
<div class="a" style="left:1341px;top:104px;width:11px;height:459.5px;background:#3f3f3f"></div>
<svg class="a" style="left:1174.8px;top:12.3px" width="14" height="14" viewBox="0 0 14 14" fill="none" stroke="#d97757" stroke-width="1.6" stroke-linecap="round" stroke-linejoin="round"><path d="M7 7L13.57 7.66"/><path d="M7 7L11.55 10.27"/><path d="M7 7L9.71 13.02"/><path d="M7 7L6.44 12.57"/><path d="M7 7L3.15 12.36"/><path d="M7 7L1.89 9.30"/><path d="M7 7L0.43 6.34"/><path d="M7 7L2.45 3.73"/><path d="M7 7L4.29 0.98"/><path d="M7 7L7.56 1.43"/><path d="M7 7L10.85 1.64"/><path d="M7 7L12.11 4.70"/><circle cx="7" cy="7" r="2.2" fill="#d97757" stroke="none"/></svg>
<svg class="a" style="left:1196.0px;top:12.3px" width="14" height="14" viewBox="0 0 14 14" fill="none" stroke="#c5c5c5" stroke-width="1.0" stroke-linecap="round" stroke-linejoin="round"><path d="M3 1.5l1.6 1.6L3 4.7 1.4 3.1z"/><path d="M3 4.7V10.5h3.5M5.5 9l1.4 1.5-1.4 1.5"/><circle cx="11" cy="11" r="1.8"/><path d="M11 9.2V3H7.5M9 1.5L7.5 3 9 4.5"/></svg>
<svg class="a" style="left:1216.6px;top:13.3px" width="16" height="12" viewBox="0 0 16 12" fill="none" stroke="#c5c5c5" stroke-width="1.0" stroke-linecap="round" stroke-linejoin="round"><circle cx="9.5" cy="6" r="4"/><path d="M4 3L1.5 6 4 9M5.5 6H1.5"/></svg>
<svg class="a" style="left:1239.0px;top:13.3px" width="16" height="12" viewBox="0 0 16 12" fill="none" stroke="#b0b0b0" stroke-width="1.0" stroke-linecap="round" stroke-linejoin="round"><circle cx="8" cy="6" r="4"/><path d="M1.2 6H4M12 6h2.8"/></svg>
<svg class="a" style="left:1260.0px;top:13.3px" width="16" height="12" viewBox="0 0 16 12" fill="none" stroke="#b0b0b0" stroke-width="1.0" stroke-linecap="round" stroke-linejoin="round"><circle cx="6.2" cy="6" r="4"/><path d="M12 3l2.5 3L12 9M10.2 6h4.3"/></svg>
<svg class="a" style="left:1282.0px;top:11.3px" width="16" height="16" viewBox="0 0 16 16" fill="none" stroke="#c5c5c5" stroke-width="1.0" stroke-linecap="round" stroke-linejoin="round"><circle cx="8" cy="8" r="6.8"/><circle cx="6.5" cy="4.5" r="0.9" fill="#c5c5c5"/><circle cx="6.5" cy="11.3" r="0.9" fill="#c5c5c5"/><path d="M6.5 4.5v6.8M6.5 6l3.5 2 -3.5 2"/><circle cx="10.3" cy="8" r="1" fill="#c5c5c5"/></svg>
<svg class="a" style="left:1304.5px;top:12.3px" width="14" height="14" viewBox="0 0 14 14" fill="none" stroke="#c5c5c5" stroke-width="1.0" stroke-linecap="round" stroke-linejoin="round"><rect x="1.5" y="1.5" width="11" height="11" rx="1.2"/><path d="M7 1.5v11" stroke-width="0.9"/></svg>
<div class="a" style="left:1327.8999999999999px;top:18.400000000000002px;width:1.8px;height:1.8px;background:#c5c5c5;border-radius:50%"></div>
<div class="a" style="left:1332.1px;top:18.400000000000002px;width:1.8px;height:1.8px;background:#c5c5c5;border-radius:50%"></div>
<div class="a" style="left:1336.3px;top:18.400000000000002px;width:1.8px;height:1.8px;background:#c5c5c5;border-radius:50%"></div>
<svg class="a" style="left:1716.0px;top:12.100000000000001px" width="14" height="14" viewBox="0 0 14 14" fill="none" stroke="#c5c5c5" stroke-width="1.0" stroke-linecap="round" stroke-linejoin="round"><rect x="1" y="1.3" width="11.8" height="11.5" rx="1"/><path d="M3.5 4.5l2.5 2-2.5 2M6.5 9.5h3.5"/></svg>
<div class="a ui" style="left:1733px;top:12.5px;color:#e0e0e0;font-size:11px">node</div>
<svg class="a" style="left:1763.6px;top:13.100000000000001px" width="12" height="12" viewBox="0 0 12 12" fill="none" stroke="#c5c5c5" stroke-width="1.1" stroke-linecap="round" stroke-linejoin="round"><path d="M6 0.5v11M0.5 6h11"/></svg>
<svg class="a" style="left:1779.0px;top:16.3px" width="8" height="6" viewBox="0 0 8 6" fill="none" stroke="#c5c5c5" stroke-width="0.9" stroke-linecap="round" stroke-linejoin="round"><path d="M1 1.5l3 3 3-3"/></svg>
<svg class="a" style="left:1795.0px;top:12.600000000000001px" width="13" height="13" viewBox="0 0 13 13" fill="none" stroke="#c5c5c5" stroke-width="1.1" stroke-linecap="round" stroke-linejoin="round"><rect x="1" y="1" width="11" height="11" rx="1.2"/><path d="M1 6.5h11"/></svg>
<svg class="a" style="left:1817.5px;top:12.600000000000001px" width="12" height="13" viewBox="0 0 12 13" fill="none" stroke="#c5c5c5" stroke-width="1.0" stroke-linecap="round" stroke-linejoin="round"><path d="M1 2.5h10M4.2 2.5V1h3.6v1.5M2.3 2.5l0.7 9.5h6l0.7-9.5M4.6 4.5v6M7.4 4.5v6"/></svg>
<div class="a" style="left:1840.1999999999998px;top:18.200000000000003px;width:1.8px;height:1.8px;background:#c5c5c5;border-radius:50%"></div>
<div class="a" style="left:1844.3999999999999px;top:18.200000000000003px;width:1.8px;height:1.8px;background:#c5c5c5;border-radius:50%"></div>
<div class="a" style="left:1848.6px;top:18.200000000000003px;width:1.8px;height:1.8px;background:#c5c5c5;border-radius:50%"></div>
<div class="a" style="left:1862px;top:13px;width:1px;height:12px;background:#6a6a6a"></div>
<svg class="a" style="left:1872.0px;top:13.100000000000001px" width="12" height="12" viewBox="0 0 12 12" fill="none" stroke="#c5c5c5" stroke-width="1.1" stroke-linecap="round" stroke-linejoin="round"><path d="M1 4V1h3M8 1h3v3M11 8v3H8M4 11H1V8"/></svg>
<svg class="a" style="left:1895.5px;top:14.600000000000001px" width="9" height="9" viewBox="0 0 9 9" fill="none" stroke="#c5c5c5" stroke-width="1.0" stroke-linecap="round" stroke-linejoin="round"><path d="M0.8 0.8l7.4 7.4M8.2 0.8L0.8 8.2"/></svg>
<svg class="a" style="left:0;top:0" width="1911" height="1026" viewBox="0 0 1911 1026"><polygon points="216.1,108.3 271.8,104.1 264.2,122.5 394.6,177.3 390.5,186.1 260.3,132.2 252.5,150.1" fill="#f5371f"/></svg>
</div></body></html>
